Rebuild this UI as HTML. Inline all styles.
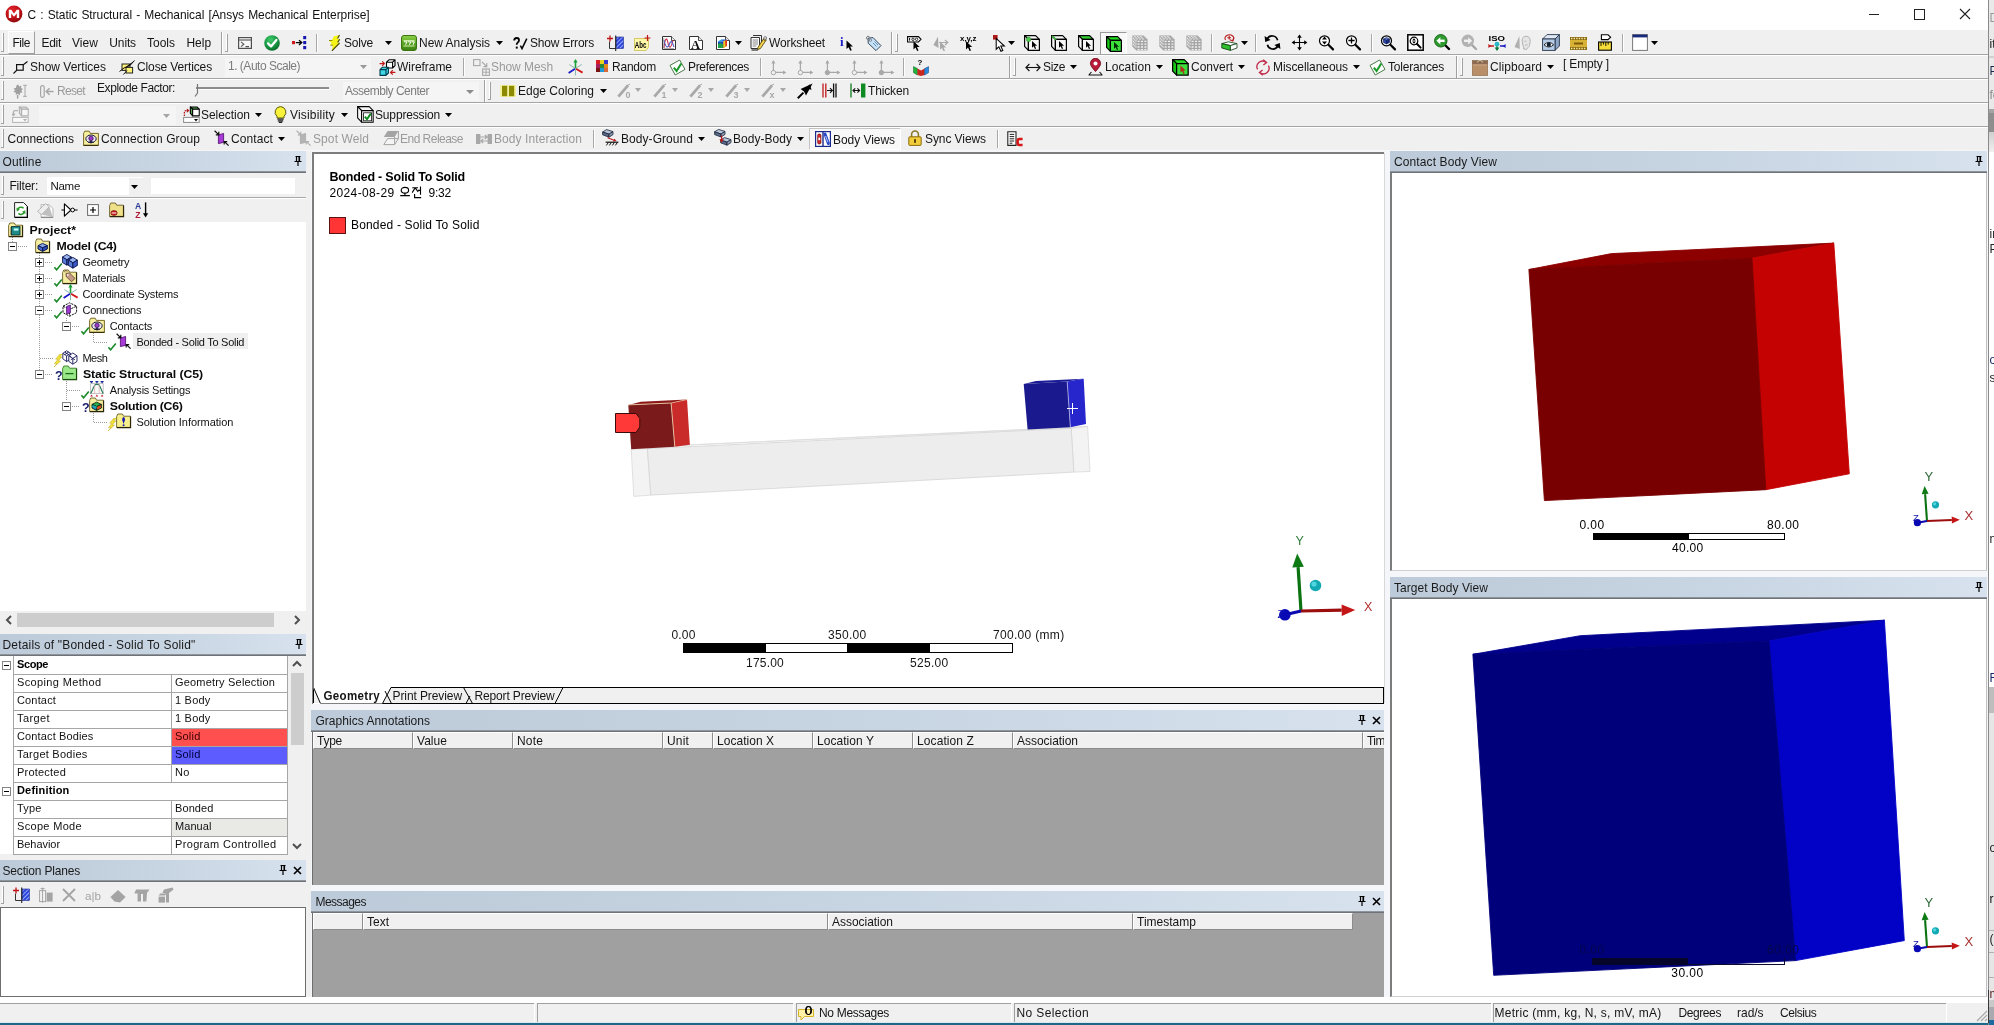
<!DOCTYPE html>
<html><head><meta charset="utf-8"><title>C : Static Structural - Mechanical</title>
<style>
html,body{margin:0;padding:0;}
body{width:1994px;height:1025px;position:relative;overflow:hidden;background:#f0f0f0;font-family:"Liberation Sans",sans-serif;}
#root{position:absolute;left:0;top:0;width:1994px;height:1025px;overflow:hidden;will-change:transform;}
.a{position:absolute;display:block;}
.t{position:absolute;white-space:nowrap;line-height:1;}
</style></head>
<body>
<div id="root">
<div class="a" style="left:0px;top:0px;width:1988px;height:30px;background:#ffffff;"></div>
<svg class="a" style="left:5px;top:5px" width="18" height="18" viewBox="0 0 18 18"><defs><radialGradient id="mlg" cx="0.4" cy="0.3" r="0.8"><stop offset="0" stop-color="#e2262c"/><stop offset="0.6" stop-color="#b90f15"/><stop offset="1" stop-color="#7c060a"/></radialGradient></defs><circle cx="9" cy="9" r="8.4" fill="url(#mlg)"/><path d="M3.8 13V4.8H6.2L9 8.6L11.8 4.8H14.2V13H11.8V8.4L9 11.8L6.2 8.4V13Z" fill="#fff"/></svg>
<div class="t" style="left:27.50px;top:9px;font-size:12.0px;color:#111;letter-spacing:-0.073px;transform:scaleY(1.0833);transform-origin:0 10px;word-spacing:0.9px;">C : Static Structural - Mechanical [Ansys Mechanical Enterprise]</div>
<div class="a" style="left:1869px;top:14px;width:10px;height:1px;background:#222;"></div>
<div class="a" style="left:1914px;top:9px;width:9px;height:9px;border:1px solid #222;"></div>
<svg class="a" style="left:1959px;top:8px" width="12" height="12" viewBox="0 0 12 12"><path d="M1 1L11 11M11 1L1 11" stroke="#222" stroke-width="1.1" fill="none"/></svg>
<div class="a" style="left:0px;top:30px;width:1988px;height:121px;background:#f0f0f0;"></div>
<div class="a" style="left:0px;top:54px;width:1988px;height:1px;background:#a5a5a5;"></div>
<div class="a" style="left:0px;top:55px;width:1988px;height:1px;background:#ffffff;"></div>
<div class="a" style="left:0px;top:78px;width:1988px;height:1px;background:#a5a5a5;"></div>
<div class="a" style="left:0px;top:79px;width:1988px;height:1px;background:#ffffff;"></div>
<div class="a" style="left:0px;top:102px;width:1988px;height:1px;background:#a5a5a5;"></div>
<div class="a" style="left:0px;top:103px;width:1988px;height:1px;background:#ffffff;"></div>
<div class="a" style="left:0px;top:126px;width:1988px;height:1px;background:#a5a5a5;"></div>
<div class="a" style="left:0px;top:127px;width:1988px;height:1px;background:#ffffff;"></div>
<div class="a" style="left:0px;top:150px;width:1988px;height:1px;background:#f6f6f6;"></div>
<div class="a" style="left:1988px;top:0px;width:6px;height:1025px;background:#ffffff;"></div>
<div class="a" style="left:1988px;top:0px;width:1px;height:1025px;background:#8a8a8a;"></div>
<div class="a" style="left:1988px;top:990px;width:1px;height:33px;background:#3a3a3a;"></div>
<div class="a" style="left:1989px;top:0px;width:5px;height:152px;background:#e9e9e9;"></div>
<div class="a" style="left:1989px;top:56px;width:5px;height:2px;background:#d0d0d0;"></div>
<div class="a" style="left:1989px;top:109px;width:5px;height:23px;background:#8e8e8e;"></div>
<div class="a" style="left:1989px;top:109px;width:5px;height:4px;background:#a4a4a4;"></div>
<div class="a" style="left:1989px;top:132px;width:5px;height:20px;background:linear-gradient(180deg,#cfcfcf,#efefef);"></div>
<div class="a" style="left:1989px;top:687px;width:5px;height:26px;background:#bdbdbd;"></div>
<div class="a" style="left:1989px;top:713px;width:5px;height:312px;background:#e6e6e6;"></div>
<div class="a" style="left:1989px;top:1000px;width:5px;height:8px;background:#c9c9c9;"></div>
<div class="a" style="left:1989px;top:1007px;width:5px;height:13px;background:#a9a9b0;"></div>
<div class="a" style="left:1989px;top:1020px;width:5px;height:5px;background:#1a6aa0;"></div>
<div class="a" style="left:1989px;top:930px;width:5px;height:1px;background:#b0b0b0;"></div>
<div class="a" style="left:1989px;top:952px;width:5px;height:1px;background:#b0b0b0;"></div>
<div class="a" style="left:1989px;top:977px;width:5px;height:1px;background:#b0b0b0;"></div>
<div class="a" style="left:1989px;top:10px;width:5px;height:16px;overflow:hidden;"><div class="t" style="left:0.5px;top:2px;font-size:12px;color:#9a9a9a;">D</div></div>
<div class="a" style="left:1989px;top:36px;width:5px;height:16px;overflow:hidden;"><div class="t" style="left:0.5px;top:2px;font-size:12px;color:#111;">it</div></div>
<div class="a" style="left:1989px;top:63px;width:5px;height:16px;overflow:hidden;"><div class="t" style="left:0.5px;top:2px;font-size:12px;color:#1a2a4a;">P</div></div>
<div class="a" style="left:1989px;top:87px;width:5px;height:16px;overflow:hidden;"><div class="t" style="left:0.5px;top:2px;font-size:12px;color:#8a8a8a;">fc</div></div>
<div class="a" style="left:1989px;top:226px;width:5px;height:16px;overflow:hidden;"><div class="t" style="left:0.5px;top:2px;font-size:12px;color:#222;">ir</div></div>
<div class="a" style="left:1989px;top:241px;width:5px;height:16px;overflow:hidden;"><div class="t" style="left:0.5px;top:2px;font-size:12px;color:#222;">Pa</div></div>
<div class="a" style="left:1989px;top:352px;width:5px;height:16px;overflow:hidden;"><div class="t" style="left:0.5px;top:2px;font-size:12px;color:#1a2a6a;">o</div></div>
<div class="a" style="left:1989px;top:370px;width:5px;height:16px;overflow:hidden;"><div class="t" style="left:0.5px;top:2px;font-size:12px;color:#222;">se</div></div>
<div class="a" style="left:1989px;top:531px;width:5px;height:16px;overflow:hidden;"><div class="t" style="left:0.5px;top:2px;font-size:12px;color:#222;">n</div></div>
<div class="a" style="left:1989px;top:670px;width:5px;height:16px;overflow:hidden;"><div class="t" style="left:0.5px;top:2px;font-size:12px;color:#1a2a6a;">Fl</div></div>
<div class="a" style="left:1989px;top:840px;width:5px;height:16px;overflow:hidden;"><div class="t" style="left:0.5px;top:2px;font-size:12px;color:#222;">o</div></div>
<div class="a" style="left:1989px;top:891px;width:5px;height:16px;overflow:hidden;"><div class="t" style="left:0.5px;top:2px;font-size:12px;color:#111;">r</div></div>
<div class="a" style="left:1989px;top:931px;width:5px;height:16px;overflow:hidden;"><div class="t" style="left:0.5px;top:2px;font-size:12px;color:#222;">(</div></div>
<div class="a" style="left:1989px;top:986px;width:5px;height:16px;overflow:hidden;"><div class="t" style="left:0.5px;top:2px;font-size:12px;color:#5a1a1a;">m</div></div>
<div class="a" style="left:0px;top:997px;width:1988px;height:6px;background:#ffffff;"></div>
<div class="a" style="left:0px;top:1003px;width:1988px;height:20px;background:#f0f0f0;"></div>
<div class="a" style="left:0px;top:1022px;width:1988px;height:1px;background:#d9e8ef;"></div>
<div class="a" style="left:0px;top:1023px;width:1988px;height:2px;background:#1b6888;"></div>
<div class="a" style="left:2px;top:33px;width:1px;height:19px;background:#ffffff;"></div>
<div class="a" style="left:3px;top:33px;width:1px;height:19px;background:#a0a0a0;"></div>
<div class="a" style="left:1px;top:51px;width:3px;height:1px;background:#a0a0a0;"></div>
<div class="a" style="left:8px;top:31px;width:27px;height:23px;background:#f4f4f4;border:1px solid #fff;border-right-color:#a0a0a0;border-bottom-color:#a0a0a0;box-sizing:border-box;"></div>
<div class="t" style="left:12.50px;top:37px;font-size:12.0px;color:#151515;letter-spacing:-0.459px;transform:scaleY(1.0833);transform-origin:0 10px;">File</div>
<div class="t" style="left:41.40px;top:37px;font-size:12.0px;color:#151515;letter-spacing:-0.269px;transform:scaleY(1.0833);transform-origin:0 10px;">Edit</div>
<div class="t" style="left:72.00px;top:37px;font-size:12.0px;color:#151515;letter-spacing:0.002px;transform:scaleY(1.0833);transform-origin:0 10px;">View</div>
<div class="t" style="left:109.30px;top:37px;font-size:12.0px;color:#151515;letter-spacing:-0.128px;transform:scaleY(1.0833);transform-origin:0 10px;">Units</div>
<div class="t" style="left:147.00px;top:37px;font-size:12.0px;color:#151515;letter-spacing:-0.003px;transform:scaleY(1.0833);transform-origin:0 10px;">Tools</div>
<div class="t" style="left:186.40px;top:37px;font-size:12.0px;color:#151515;letter-spacing:0.055px;transform:scaleY(1.0833);transform-origin:0 10px;">Help</div>
<div class="a" style="left:221px;top:32px;width:1px;height:22px;background:#a0a0a0;"></div>
<div class="a" style="left:222px;top:32px;width:1px;height:22px;background:#ffffff;"></div>
<div class="a" style="left:226px;top:34px;width:1px;height:18px;background:#ffffff;"></div>
<div class="a" style="left:227px;top:34px;width:1px;height:18px;background:#a0a0a0;"></div>
<div class="a" style="left:225px;top:51px;width:3px;height:1px;background:#a0a0a0;"></div>
<div class="a" style="left:316px;top:34px;width:1px;height:18px;background:#a8a8a8;"></div>
<div class="a" style="left:317px;top:34px;width:1px;height:18px;background:#ffffff;"></div>
<div class="t" style="left:344.00px;top:37px;font-size:12.0px;color:#151515;letter-spacing:-0.204px;transform:scaleY(1.0833);transform-origin:0 10px;">Solve</div>
<svg class="a" style="left:385px;top:41px" width="7" height="4" viewBox="0 0 7 4"><path d="M0 0H7L3.5 4Z" fill="#000"/></svg>
<div class="t" style="left:419.00px;top:37px;font-size:12.0px;color:#151515;letter-spacing:-0.030px;transform:scaleY(1.0833);transform-origin:0 10px;">New Analysis</div>
<svg class="a" style="left:496px;top:41px" width="7" height="4" viewBox="0 0 7 4"><path d="M0 0H7L3.5 4Z" fill="#000"/></svg>
<div class="t" style="left:530.00px;top:37px;font-size:12.0px;color:#151515;letter-spacing:-0.183px;transform:scaleY(1.0833);transform-origin:0 10px;">Show Errors</div>
<svg class="a" style="left:735px;top:41px" width="7" height="4" viewBox="0 0 7 4"><path d="M0 0H7L3.5 4Z" fill="#000"/></svg>
<div class="t" style="left:769.00px;top:37px;font-size:12.0px;color:#151515;letter-spacing:-0.126px;transform:scaleY(1.0833);transform-origin:0 10px;">Worksheet</div>
<div class="a" style="left:891px;top:32px;width:1px;height:22px;background:#a0a0a0;"></div>
<div class="a" style="left:892px;top:32px;width:1px;height:22px;background:#ffffff;"></div>
<div class="a" style="left:896px;top:34px;width:1px;height:18px;background:#ffffff;"></div>
<div class="a" style="left:897px;top:34px;width:1px;height:18px;background:#a0a0a0;"></div>
<div class="a" style="left:895px;top:51px;width:3px;height:1px;background:#a0a0a0;"></div>
<svg class="a" style="left:1008px;top:41px" width="7" height="4" viewBox="0 0 7 4"><path d="M0 0H7L3.5 4Z" fill="#000"/></svg>
<div class="a" style="left:1100px;top:32px;width:27px;height:22px;background:#f8f8f8;border:1px solid #fff;border-left-color:#9a9a9a;border-top-color:#9a9a9a;border-bottom:none;box-sizing:border-box;"></div>
<div class="a" style="left:1211px;top:34px;width:1px;height:18px;background:#a8a8a8;"></div>
<div class="a" style="left:1212px;top:34px;width:1px;height:18px;background:#ffffff;"></div>
<svg class="a" style="left:1241px;top:41px" width="7" height="4" viewBox="0 0 7 4"><path d="M0 0H7L3.5 4Z" fill="#000"/></svg>
<div class="a" style="left:1255px;top:34px;width:1px;height:18px;background:#a8a8a8;"></div>
<div class="a" style="left:1256px;top:34px;width:1px;height:18px;background:#ffffff;"></div>
<div class="a" style="left:1371px;top:34px;width:1px;height:18px;background:#a8a8a8;"></div>
<div class="a" style="left:1372px;top:34px;width:1px;height:18px;background:#ffffff;"></div>
<div class="a" style="left:1622px;top:34px;width:1px;height:18px;background:#a8a8a8;"></div>
<div class="a" style="left:1623px;top:34px;width:1px;height:18px;background:#ffffff;"></div>
<svg class="a" style="left:1651px;top:41px" width="7" height="4" viewBox="0 0 7 4"><path d="M0 0H7L3.5 4Z" fill="#000"/></svg>
<div class="a" style="left:2px;top:57px;width:1px;height:19px;background:#ffffff;"></div>
<div class="a" style="left:3px;top:57px;width:1px;height:19px;background:#a0a0a0;"></div>
<div class="a" style="left:1px;top:75px;width:3px;height:1px;background:#a0a0a0;"></div>
<div class="t" style="left:30.00px;top:61px;font-size:12.0px;color:#151515;letter-spacing:-0.003px;transform:scaleY(1.0833);transform-origin:0 10px;">Show Vertices</div>
<div class="t" style="left:137.00px;top:61px;font-size:12.0px;color:#151515;letter-spacing:-0.121px;transform:scaleY(1.0833);transform-origin:0 10px;">Close Vertices</div>
<div class="a" style="left:225px;top:58px;width:146px;height:19px;background:#f5f5f5;"></div>
<div class="t" style="left:228.00px;top:60px;font-size:12.0px;color:#7c7c7c;letter-spacing:-0.491px;">1. (Auto Scale)</div>
<svg class="a" style="left:360px;top:65px" width="7" height="4" viewBox="0 0 7 4"><path d="M0 0H7L3.5 4Z" fill="#9a9a9a"/></svg>
<div class="t" style="left:397.00px;top:61px;font-size:12.0px;color:#151515;letter-spacing:-0.037px;transform:scaleY(1.0833);transform-origin:0 10px;">Wireframe</div>
<div class="a" style="left:463px;top:58px;width:1px;height:18px;background:#a8a8a8;"></div>
<div class="a" style="left:464px;top:58px;width:1px;height:18px;background:#ffffff;"></div>
<div class="t" style="left:491.00px;top:61px;font-size:12.0px;color:#9a9a9a;letter-spacing:-0.077px;transform:scaleY(1.0833);transform-origin:0 10px;">Show Mesh</div>
<div class="t" style="left:612.00px;top:61px;font-size:12.0px;color:#151515;letter-spacing:-0.226px;transform:scaleY(1.0833);transform-origin:0 10px;">Random</div>
<div class="t" style="left:688.00px;top:61px;font-size:12.0px;color:#151515;letter-spacing:-0.336px;transform:scaleY(1.0833);transform-origin:0 10px;">Preferences</div>
<div class="a" style="left:760px;top:58px;width:1px;height:18px;background:#a8a8a8;"></div>
<div class="a" style="left:761px;top:58px;width:1px;height:18px;background:#ffffff;"></div>
<div class="a" style="left:903px;top:58px;width:1px;height:18px;background:#a8a8a8;"></div>
<div class="a" style="left:904px;top:58px;width:1px;height:18px;background:#ffffff;"></div>
<div class="a" style="left:1009px;top:56px;width:1px;height:22px;background:#a0a0a0;"></div>
<div class="a" style="left:1010px;top:56px;width:1px;height:22px;background:#ffffff;"></div>
<div class="a" style="left:1014px;top:58px;width:1px;height:18px;background:#ffffff;"></div>
<div class="a" style="left:1015px;top:58px;width:1px;height:18px;background:#a0a0a0;"></div>
<div class="a" style="left:1013px;top:75px;width:3px;height:1px;background:#a0a0a0;"></div>
<div class="t" style="left:1043.00px;top:61px;font-size:12.0px;color:#151515;letter-spacing:-0.336px;transform:scaleY(1.0833);transform-origin:0 10px;">Size</div>
<svg class="a" style="left:1070px;top:65px" width="7" height="4" viewBox="0 0 7 4"><path d="M0 0H7L3.5 4Z" fill="#000"/></svg>
<div class="t" style="left:1105.00px;top:61px;font-size:12.0px;color:#151515;letter-spacing:0.079px;transform:scaleY(1.0833);transform-origin:0 10px;">Location</div>
<svg class="a" style="left:1156px;top:65px" width="7" height="4" viewBox="0 0 7 4"><path d="M0 0H7L3.5 4Z" fill="#000"/></svg>
<div class="t" style="left:1191.00px;top:61px;font-size:12.0px;color:#151515;letter-spacing:-0.003px;transform:scaleY(1.0833);transform-origin:0 10px;">Convert</div>
<svg class="a" style="left:1238px;top:65px" width="7" height="4" viewBox="0 0 7 4"><path d="M0 0H7L3.5 4Z" fill="#000"/></svg>
<div class="t" style="left:1273.00px;top:61px;font-size:12.0px;color:#151515;letter-spacing:-0.080px;transform:scaleY(1.0833);transform-origin:0 10px;">Miscellaneous</div>
<svg class="a" style="left:1353px;top:65px" width="7" height="4" viewBox="0 0 7 4"><path d="M0 0H7L3.5 4Z" fill="#000"/></svg>
<div class="t" style="left:1388.00px;top:61px;font-size:12.0px;color:#151515;letter-spacing:-0.203px;transform:scaleY(1.0833);transform-origin:0 10px;">Tolerances</div>
<div class="a" style="left:1456px;top:56px;width:1px;height:22px;background:#a0a0a0;"></div>
<div class="a" style="left:1457px;top:56px;width:1px;height:22px;background:#ffffff;"></div>
<div class="a" style="left:1461px;top:58px;width:1px;height:18px;background:#ffffff;"></div>
<div class="a" style="left:1462px;top:58px;width:1px;height:18px;background:#a0a0a0;"></div>
<div class="a" style="left:1460px;top:75px;width:3px;height:1px;background:#a0a0a0;"></div>
<div class="t" style="left:1490.00px;top:61px;font-size:12.0px;color:#151515;letter-spacing:0.071px;transform:scaleY(1.0833);transform-origin:0 10px;">Clipboard</div>
<svg class="a" style="left:1547px;top:65px" width="7" height="4" viewBox="0 0 7 4"><path d="M0 0H7L3.5 4Z" fill="#000"/></svg>
<div class="t" style="left:1563.00px;top:58px;font-size:12.0px;color:#151515;letter-spacing:-0.149px;">[ Empty ]</div>
<div class="a" style="left:2px;top:81px;width:1px;height:19px;background:#ffffff;"></div>
<div class="a" style="left:3px;top:81px;width:1px;height:19px;background:#a0a0a0;"></div>
<div class="a" style="left:1px;top:99px;width:3px;height:1px;background:#a0a0a0;"></div>
<div class="t" style="left:57.00px;top:85px;font-size:12.0px;color:#9a9a9a;letter-spacing:-0.670px;transform:scaleY(1.0833);transform-origin:0 10px;">Reset</div>
<div class="t" style="left:97.00px;top:82px;font-size:12.0px;color:#151515;letter-spacing:-0.403px;">Explode Factor:</div>
<div class="a" style="left:196px;top:87px;width:133px;height:2px;background:#8c8c8c;"></div>
<div class="a" style="left:196px;top:89px;width:133px;height:1px;background:#fdfdfd;"></div>
<svg class="a" style="left:194px;top:84px" width="6" height="13" viewBox="0 0 6 13"><path d="M3.5 0V9L1 12.5" stroke="#777" stroke-width="1.2" fill="none"/></svg>
<div class="a" style="left:343px;top:82px;width:136px;height:19px;background:#f5f5f5;"></div>
<div class="t" style="left:345.00px;top:85px;font-size:12.0px;color:#7c7c7c;letter-spacing:-0.491px;">Assembly Center</div>
<svg class="a" style="left:466px;top:90px" width="8" height="4" viewBox="0 0 8 4"><path d="M0 0H8L4.0 4Z" fill="#8c8c8c"/></svg>
<div class="a" style="left:484px;top:80px;width:1px;height:22px;background:#a0a0a0;"></div>
<div class="a" style="left:485px;top:80px;width:1px;height:22px;background:#ffffff;"></div>
<div class="a" style="left:489px;top:82px;width:1px;height:18px;background:#ffffff;"></div>
<div class="a" style="left:490px;top:82px;width:1px;height:18px;background:#a0a0a0;"></div>
<div class="a" style="left:488px;top:99px;width:3px;height:1px;background:#a0a0a0;"></div>
<div class="t" style="left:518.00px;top:85px;font-size:12.0px;color:#151515;letter-spacing:-0.004px;transform:scaleY(1.0833);transform-origin:0 10px;">Edge Coloring</div>
<svg class="a" style="left:600px;top:89px" width="7" height="4" viewBox="0 0 7 4"><path d="M0 0H7L3.5 4Z" fill="#000"/></svg>
<svg class="a" style="left:635px;top:88px" width="6" height="4" viewBox="0 0 6 4"><path d="M0 0H6L3.0 4Z" fill="#a8a8a8"/></svg>
<svg class="a" style="left:672px;top:88px" width="6" height="4" viewBox="0 0 6 4"><path d="M0 0H6L3.0 4Z" fill="#a8a8a8"/></svg>
<svg class="a" style="left:708px;top:88px" width="6" height="4" viewBox="0 0 6 4"><path d="M0 0H6L3.0 4Z" fill="#a8a8a8"/></svg>
<svg class="a" style="left:744px;top:88px" width="6" height="4" viewBox="0 0 6 4"><path d="M0 0H6L3.0 4Z" fill="#a8a8a8"/></svg>
<svg class="a" style="left:780px;top:88px" width="6" height="4" viewBox="0 0 6 4"><path d="M0 0H6L3.0 4Z" fill="#a8a8a8"/></svg>
<div class="t" style="left:868.00px;top:85px;font-size:12.0px;color:#151515;letter-spacing:-0.145px;transform:scaleY(1.0833);transform-origin:0 10px;">Thicken</div>
<div class="a" style="left:2px;top:105px;width:1px;height:19px;background:#ffffff;"></div>
<div class="a" style="left:3px;top:105px;width:1px;height:19px;background:#a0a0a0;"></div>
<div class="a" style="left:1px;top:123px;width:3px;height:1px;background:#a0a0a0;"></div>
<div class="a" style="left:39px;top:106px;width:137px;height:19px;background:#f5f5f5;"></div>
<svg class="a" style="left:163px;top:114px" width="7" height="4" viewBox="0 0 7 4"><path d="M0 0H7L3.5 4Z" fill="#a5a5a5"/></svg>
<div class="t" style="left:201.00px;top:109px;font-size:12.0px;color:#151515;letter-spacing:-0.041px;transform:scaleY(1.0833);transform-origin:0 10px;">Selection</div>
<svg class="a" style="left:255px;top:113px" width="7" height="4" viewBox="0 0 7 4"><path d="M0 0H7L3.5 4Z" fill="#000"/></svg>
<div class="t" style="left:290.00px;top:109px;font-size:12.0px;color:#151515;letter-spacing:0.188px;transform:scaleY(1.0833);transform-origin:0 10px;">Visibility</div>
<svg class="a" style="left:341px;top:113px" width="7" height="4" viewBox="0 0 7 4"><path d="M0 0H7L3.5 4Z" fill="#000"/></svg>
<div class="t" style="left:375.00px;top:109px;font-size:12.0px;color:#151515;letter-spacing:-0.155px;transform:scaleY(1.0833);transform-origin:0 10px;">Suppression</div>
<svg class="a" style="left:445px;top:113px" width="7" height="4" viewBox="0 0 7 4"><path d="M0 0H7L3.5 4Z" fill="#000"/></svg>
<div class="a" style="left:2px;top:129px;width:1px;height:19px;background:#ffffff;"></div>
<div class="a" style="left:3px;top:129px;width:1px;height:19px;background:#a0a0a0;"></div>
<div class="a" style="left:1px;top:147px;width:3px;height:1px;background:#a0a0a0;"></div>
<div class="t" style="left:7.50px;top:133px;font-size:12.0px;color:#151515;letter-spacing:-0.019px;transform:scaleY(1.0833);transform-origin:0 10px;">Connections</div>
<div class="t" style="left:101.00px;top:133px;font-size:12.0px;color:#151515;letter-spacing:0.100px;transform:scaleY(1.0833);transform-origin:0 10px;">Connection Group</div>
<div class="t" style="left:231.00px;top:133px;font-size:12.0px;color:#151515;letter-spacing:0.092px;transform:scaleY(1.0833);transform-origin:0 10px;">Contact</div>
<svg class="a" style="left:278px;top:137px" width="7" height="4" viewBox="0 0 7 4"><path d="M0 0H7L3.5 4Z" fill="#000"/></svg>
<div class="t" style="left:313.00px;top:133px;font-size:12.0px;color:#9a9a9a;letter-spacing:0.095px;transform:scaleY(1.0833);transform-origin:0 10px;">Spot Weld</div>
<div class="t" style="left:400.00px;top:133px;font-size:12.0px;color:#9a9a9a;letter-spacing:-0.519px;transform:scaleY(1.0833);transform-origin:0 10px;">End Release</div>
<div class="t" style="left:494.00px;top:133px;font-size:12.0px;color:#9a9a9a;letter-spacing:0.080px;transform:scaleY(1.0833);transform-origin:0 10px;">Body Interaction</div>
<div class="a" style="left:593px;top:130px;width:1px;height:18px;background:#a8a8a8;"></div>
<div class="a" style="left:594px;top:130px;width:1px;height:18px;background:#ffffff;"></div>
<div class="t" style="left:621.00px;top:133px;font-size:12.0px;color:#151515;letter-spacing:0.057px;transform:scaleY(1.0833);transform-origin:0 10px;">Body-Ground</div>
<svg class="a" style="left:698px;top:137px" width="7" height="4" viewBox="0 0 7 4"><path d="M0 0H7L3.5 4Z" fill="#000"/></svg>
<div class="t" style="left:733.00px;top:133px;font-size:12.0px;color:#151515;letter-spacing:0.033px;transform:scaleY(1.0833);transform-origin:0 10px;">Body-Body</div>
<svg class="a" style="left:797px;top:137px" width="7" height="4" viewBox="0 0 7 4"><path d="M0 0H7L3.5 4Z" fill="#000"/></svg>
<div class="a" style="left:809px;top:128px;width:92px;height:22px;background:#f8f8f8;border:1px solid #c4c4c4;border-right-color:#fff;border-bottom-color:#fff;box-sizing:border-box;"></div>
<div class="t" style="left:833.00px;top:134px;font-size:12.0px;color:#151515;letter-spacing:-0.048px;transform:scaleY(1.0833);transform-origin:0 10px;">Body Views</div>
<div class="t" style="left:925.00px;top:133px;font-size:12.0px;color:#151515;letter-spacing:-0.080px;transform:scaleY(1.0833);transform-origin:0 10px;">Sync Views</div>
<div class="a" style="left:997px;top:130px;width:1px;height:18px;background:#a8a8a8;"></div>
<div class="a" style="left:998px;top:130px;width:1px;height:18px;background:#ffffff;"></div>
<svg class="a" style="left:238px;top:37px" width="14" height="12" viewBox="0 0 14 12"><rect x="0.6" y="0.6" width="12.8" height="10.8" fill="#f6f6f6" stroke="#505050" stroke-width="1.2"/><path d="M0.6 3H13.4" stroke="#505050" stroke-width="1.1"/><path d="M3 4.8L5.8 7.2L3 9.6M7.5 9.6H11" stroke="#505050" stroke-width="1.1" fill="none"/></svg>
<svg class="a" style="left:264px;top:35px" width="16" height="16" viewBox="0 0 16 16"><defs><radialGradient id="gck" cx="0.4" cy="0.3" r="0.8"><stop offset="0" stop-color="#3fca6a"/><stop offset="0.6" stop-color="#14923f"/><stop offset="1" stop-color="#075a24"/></radialGradient></defs><circle cx="8" cy="8" r="7.8" fill="url(#gck)"/><path d="M4 8.4L7 11.4L12.4 5" stroke="#fff" stroke-width="2.3" fill="none" stroke-linecap="round" stroke-linejoin="round"/></svg>
<svg class="a" style="left:292px;top:36px" width="16" height="14" viewBox="0 0 16 14"><rect x="0" y="5" width="3" height="3.2" fill="#d01818"/><path d="M3.8 6.6H9.4M7 4.2L9.8 6.6L7 9" stroke="#000" stroke-width="1.3" fill="none"/><rect x="11.2" y="0" width="3" height="3.2" fill="#1818b0"/><rect x="11.2" y="5" width="3" height="3.2" fill="#1818b0"/><rect x="11.2" y="10" width="3" height="3.2" fill="#1818b0"/></svg>
<svg class="a" style="left:328px;top:34px" width="13" height="18" viewBox="0 0 13 18"><polygon points="11.4,1 6,2.2 3.8,6 1.2,6.4 1.8,8 3.8,8.4 2.4,11 4.8,11.8 3.8,16.8 11.6,9 9.6,8.6 11.8,5.2 9.6,4.8" fill="#f6f416"/><path d="M11.5 1L9.6 4.6M11.8 5.2L9.6 8.4M11.6 9L3.9 16.8" stroke="#45450a" stroke-width="1.1" fill="none"/><path d="M1 6.5H4.4M2.4 11.2H4.8" stroke="#8c8a10" stroke-width="1"/></svg>
<svg class="a" style="left:401px;top:35px" width="16" height="16" viewBox="0 0 16 16"><defs><linearGradient id="gna" x1="0" y1="0" x2="0" y2="1"><stop offset="0" stop-color="#8fd04a"/><stop offset="0.5" stop-color="#5aa822"/><stop offset="1" stop-color="#3c7f10"/></linearGradient></defs><rect x="0.5" y="0.5" width="15" height="15" rx="2.5" fill="url(#gna)" stroke="#3a7410" stroke-width="1"/><path d="M2.5 5.6H13.5" stroke="#d6f0b0" stroke-width="1"/><path d="M3 6.8H6L4.6 9.8M6.8 6.8H9.8L8.4 9.8M10.4 6.8H13.4L12 9.8" stroke="#fff" stroke-width="1" fill="none"/><path d="M2.5 11H13.5" stroke="#d6f0b0" stroke-width="1"/></svg>
<svg class="a" style="left:513px;top:37px" width="15" height="14" viewBox="0 0 15 14"><path d="M1.2 3.6Q1.2 1 3.6 1Q6 1 6 3.2Q6 4.6 4.6 5.6Q3.7 6.3 3.7 7.8" stroke="#000" stroke-width="1.8" fill="none"/><rect x="2.8" y="9.6" width="1.9" height="2" fill="#000"/><path d="M7.4 8.6L9 11.6L13.8 1.6" stroke="#000" stroke-width="1.5" fill="none"/></svg>
<svg class="a" style="left:607px;top:35px" width="17" height="16" viewBox="0 0 17 16"><defs><pattern id="hat" width="3" height="3" patternUnits="userSpaceOnUse" patternTransform="rotate(-45)"><rect width="3" height="3" fill="#2c45d8"/><rect width="3" height="1" fill="#93a6ff"/></pattern></defs><rect x="9" y="2" width="7.5" height="11.5" fill="url(#hat)" stroke="#1b2a8c" stroke-width="0.6"/><path d="M2.5 6.5V13.5H8.5" stroke="#333" stroke-width="1" fill="none"/><path d="M8.7 0.5V16" stroke="#222" stroke-width="1.1"/><path d="M0 3.5H6M3 0.5V6.5" stroke="#c01414" stroke-width="1.3"/></svg>
<svg class="a" style="left:634px;top:35px" width="17" height="16" viewBox="0 0 17 16"><path d="M0.5 3.5H14.5V12L12 15.5H0.5Z" fill="#fff8a8" stroke="#cbbf4a" stroke-width="0.8"/><text x="0.8" y="12.6" font-family="Liberation Sans" font-weight="700" font-size="9.2" textLength="11.6" lengthAdjust="spacingAndGlyphs" fill="#000">Abc</text><path d="M10.5 3H16.5M13.5 0V6" stroke="#c01414" stroke-width="1.2"/></svg>
<svg class="a" style="left:661px;top:35px" width="16" height="16" viewBox="0 0 16 16"><path d="M1.5 1.5H10.5L14.5 5.5V14.5H1.5Z" fill="#fff" stroke="#333" stroke-width="1"/><path d="M10.5 1.5V5.5H14.5" fill="#e8e8e8" stroke="#333" stroke-width="0.9"/><path d="M3 13C4 2 6 2 7 8S10 14 12 5" stroke="#c42a4a" stroke-width="1.1" fill="none"/><path d="M3 5C5 14 7 13 8.5 9S11 6 13 12" stroke="#4a5ac4" stroke-width="1.1" fill="none"/><path d="M2.8 3V13.5H13" stroke="#888" stroke-width="0.7" fill="none"/></svg>
<svg class="a" style="left:688px;top:35px" width="16" height="16" viewBox="0 0 16 16"><path d="M1.5 1.5H10.5L14.5 5.5V14.5H1.5Z" fill="#fff" stroke="#333" stroke-width="1"/><path d="M10.5 1.5V5.5H14.5" fill="#e8e8e8" stroke="#333" stroke-width="0.9"/><text x="3" y="13.6" font-family="Liberation Serif" font-weight="700" font-size="12.5" fill="#111">A</text></svg>
<svg class="a" style="left:715px;top:35px" width="16" height="16" viewBox="0 0 16 16"><path d="M1.5 1.5H10.5L14.5 5.5V14.5H1.5Z" fill="#fff" stroke="#333" stroke-width="1"/><path d="M10.5 1.5V5.5H14.5" fill="#e8e8e8" stroke="#333" stroke-width="0.9"/><polygon points="3,6.5 6.5,4.5 12,4.5 8.5,6.5" fill="#2a6ad8"/><polygon points="3,6.5 8.5,6.5 8.5,13 3,13" fill="#1d49c0"/><polygon points="3,9 5.5,8 8.5,9.5 8.5,13 3,13" fill="#21a04a"/><polygon points="8.5,6.5 12,4.5 12,11 8.5,13" fill="#e03a1a"/><polygon points="8.5,6.5 10,5.6 10.5,12 8.5,13" fill="#e8d020"/><polygon points="3,6.5 6.5,4.5 8,5 5,7" fill="#30b0e0"/></svg>
<svg class="a" style="left:750px;top:34px" width="17" height="17" viewBox="0 0 17 17"><path d="M1 3.5H9.5V14.5H1Z" fill="#fff" stroke="#333" stroke-width="1"/><path d="M3 1.5H11.5V12" fill="none" stroke="#333" stroke-width="1"/><path d="M2.6 6H8M2.6 8H8M2.6 10H8M2.6 12H6.4" stroke="#666" stroke-width="0.8"/><path d="M1.5 16H8" stroke="#222" stroke-width="1.1"/><path d="M8 13.2L14 4.2L16.3 5.8L10.4 14.6L7.6 15.6Z" fill="#f2d24a" stroke="#4a3a08" stroke-width="0.8"/><path d="M13.2 5.4L15.5 7" stroke="#4a3a08" stroke-width="0.8"/><circle cx="15.2" cy="4" r="1.5" fill="#d0d0d0" stroke="#555" stroke-width="0.6"/></svg>
<svg class="a" style="left:840px;top:35px" width="15" height="16" viewBox="0 0 15 16"><text x="0" y="10.6" font-family="Liberation Serif" font-weight="700" font-size="13" fill="#1b1bc8">i</text><path transform="translate(6.5 5.5) scale(1.05)" d="M0 0V8.2L2 6.4L3.6 9.8L5 9.2L3.5 5.8H6.2Z" fill="#000"/></svg>
<svg class="a" style="left:865px;top:35px" width="17" height="16" viewBox="0 0 17 16"><path d="M2.2 4.4C0.4 2.6 2.4 0.2 4.6 2" stroke="#555" stroke-width="0.9" fill="none"/><path d="M3 3.2L8 2.6L16 10.6L11 15.6L3.2 8.2Z" fill="#c7e1f6" stroke="#3a4a5a" stroke-width="1"/><circle cx="5.4" cy="5.2" r="1.1" fill="#fff" stroke="#3a4a5a" stroke-width="0.7"/><path d="M8 8L11.5 11.5M9.6 6.6L13 10" stroke="#5a87b0" stroke-width="0.9"/></svg>
<svg class="a" style="left:907px;top:35px" width="15" height="16" viewBox="0 0 15 16"><path d="M0.6 1.6H11.4L14 4.3L11.4 7H0.6Z" fill="#fff" stroke="#000" stroke-width="1.1"/><path d="M2.6 3V5.6" stroke="#000" stroke-width="1"/><circle cx="6" cy="4.3" r="1.2" fill="none" stroke="#000" stroke-width="0.8"/><circle cx="9.6" cy="4.3" r="1.2" fill="none" stroke="#000" stroke-width="0.8"/><path transform="translate(6.5 6.2) scale(1.0)" d="M0 0V8.2L2 6.4L3.6 9.8L5 9.2L3.5 5.8H6.2Z" fill="#000"/></svg>
<svg class="a" style="left:933px;top:35px" width="16" height="16" viewBox="0 0 16 16"><polygon points="0.5,10 5,1.5 5.5,13 " fill="#a9a9a9"/><path d="M6 7.5H14.5M12 5L14.8 7.5L12 10" stroke="#a9a9a9" stroke-width="1.2" fill="none"/><path transform="translate(7 6.6) scale(1.0)" d="M0 0V8.2L2 6.4L3.6 9.8L5 9.2L3.5 5.8H6.2Z" fill="#a9a9a9"/></svg>
<svg class="a" style="left:960px;top:35px" width="17" height="16" viewBox="0 0 17 16"><text x="0" y="5.6" font-family="Liberation Sans" font-weight="700" font-size="6.6" textLength="16.5" lengthAdjust="spacingAndGlyphs" fill="#000">x,y,z</text><path transform="translate(6 6.2) scale(1.0)" d="M0 0V8.2L2 6.4L3.6 9.8L5 9.2L3.5 5.8H6.2Z" fill="#000"/></svg>
<svg class="a" style="left:993px;top:35px" width="13" height="17" viewBox="0 0 13 17"><rect x="0" y="0" width="4.6" height="4.6" fill="#b01a1a"/><path transform="translate(3.2 3.4) scale(1.32)" d="M0 0V8.2L2 6.4L3.6 9.8L5 9.2L3.5 5.8H6.2Z" fill="#fff" stroke="#000" stroke-width="0.8"/></svg>
<svg class="a" style="left:1024px;top:35px" width="16" height="16" viewBox="0 0 16 16"><polygon points="0.6,0.6 11.6,0.6 15.4,4.4 4.4,4.4" fill="#f6f6f6" stroke="#000" stroke-width="1.2" stroke-linejoin="round"/><polygon points="0.6,0.6 4.4,4.4 4.4,15.4 0.6,11.4" fill="#f6f6f6" stroke="#000" stroke-width="1.2" stroke-linejoin="round"/><rect x="4.4" y="4.4" width="11" height="11" fill="#f6f6f6" stroke="#000" stroke-width="1.2" stroke-linejoin="round"/><circle cx="4.6" cy="4.4" r="2.3" fill="#4fc84f" stroke="#2a8a2a" stroke-width="0.5"/><path transform="translate(8 6) scale(0.82)" d="M0 0V8.2L2 6.4L3.6 9.8L5 9.2L3.5 5.8H6.2Z" fill="#000"/></svg>
<svg class="a" style="left:1051px;top:35px" width="16" height="16" viewBox="0 0 16 16"><polygon points="0.6,0.6 11.6,0.6 15.4,4.4 4.4,4.4" fill="#f6f6f6" stroke="#000" stroke-width="1.2" stroke-linejoin="round"/><polygon points="0.6,0.6 4.4,4.4 4.4,15.4 0.6,11.4" fill="#f6f6f6" stroke="#000" stroke-width="1.2" stroke-linejoin="round"/><rect x="4.4" y="4.4" width="11" height="11" fill="#f6f6f6" stroke="#000" stroke-width="1.2" stroke-linejoin="round"/><polygon points="0.8,1.6 1.8,0.6 5.4,4.2 4.4,5.2" fill="#4fc84f" stroke="#2a8a2a" stroke-width="0.5"/><path transform="translate(8 6) scale(0.82)" d="M0 0V8.2L2 6.4L3.6 9.8L5 9.2L3.5 5.8H6.2Z" fill="#000"/></svg>
<svg class="a" style="left:1078px;top:35px" width="16" height="16" viewBox="0 0 16 16"><polygon points="0.6,0.6 11.6,0.6 15.4,4.4 4.4,4.4" fill="#35d035" stroke="#000" stroke-width="1.2" stroke-linejoin="round"/><polygon points="0.6,0.6 4.4,4.4 4.4,15.4 0.6,11.4" fill="#f6f6f6" stroke="#000" stroke-width="1.2" stroke-linejoin="round"/><rect x="4.4" y="4.4" width="11" height="11" fill="#f6f6f6" stroke="#000" stroke-width="1.2" stroke-linejoin="round"/><path transform="translate(8 6) scale(0.82)" d="M0 0V8.2L2 6.4L3.6 9.8L5 9.2L3.5 5.8H6.2Z" fill="#000"/></svg>
<svg class="a" style="left:1106px;top:36px" width="16" height="16" viewBox="0 0 16 16"><polygon points="0.6,0.6 11.6,0.6 15.4,4.4 4.4,4.4" fill="#22dd22" stroke="#000" stroke-width="1.2" stroke-linejoin="round"/><polygon points="0.6,0.6 4.4,4.4 4.4,15.4 0.6,11.4" fill="#16c816" stroke="#000" stroke-width="1.2" stroke-linejoin="round"/><rect x="4.4" y="4.4" width="11" height="11" fill="#3be03b" stroke="#000" stroke-width="1.2" stroke-linejoin="round"/><path transform="translate(8 6) scale(0.82)" d="M0 0V8.2L2 6.4L3.6 9.8L5 9.2L3.5 5.8H6.2Z" fill="#032a03"/></svg>
<svg class="a" style="left:1132px;top:35px" width="16" height="16" viewBox="0 0 16 16"><polygon points="0.4,0.4 11.6,0.4 15.6,4.4 15.6,15.6 4.4,15.6 0.4,11.6" fill="#a6a6a6"/><path d="M1.8 1.6H11M3 2.8H12.2M4.2 4H13.4" stroke="#f0f0f0" stroke-width="0.9" stroke-dasharray="1.8 1.2"/><path d="M5.6 6.4H14.6M5.6 9.2H14.6M5.6 12H14.6M5.6 14.6H14.6" stroke="#f0f0f0" stroke-width="1.3" stroke-dasharray="2 1.4"/><path d="M1.6 2.6V11M2.8 3.8V12.2M4 5V13.4" stroke="#f0f0f0" stroke-width="0.9" stroke-dasharray="1.8 1.2"/></svg>
<svg class="a" style="left:1159px;top:35px" width="16" height="16" viewBox="0 0 16 16"><polygon points="0.4,0.4 11.6,0.4 15.6,4.4 15.6,15.6 4.4,15.6 0.4,11.6" fill="#a6a6a6"/><path d="M1.8 1.6H11M3 2.8H12.2M4.2 4H13.4" stroke="#f0f0f0" stroke-width="0.9" stroke-dasharray="1.8 1.2"/><path d="M5.6 6.4H14.6M5.6 9.2H14.6M5.6 12H14.6M5.6 14.6H14.6" stroke="#f0f0f0" stroke-width="1.3" stroke-dasharray="2 1.4"/><path d="M1.6 2.6V11M2.8 3.8V12.2M4 5V13.4" stroke="#f0f0f0" stroke-width="0.9" stroke-dasharray="1.8 1.2"/></svg>
<svg class="a" style="left:1186px;top:35px" width="16" height="16" viewBox="0 0 16 16"><polygon points="0.4,0.4 11.6,0.4 15.6,4.4 15.6,15.6 4.4,15.6 0.4,11.6" fill="#a6a6a6"/><path d="M1.8 1.6H11M3 2.8H12.2M4.2 4H13.4" stroke="#f0f0f0" stroke-width="0.9" stroke-dasharray="1.8 1.2"/><path d="M5.6 6.4H14.6M5.6 9.2H14.6M5.6 12H14.6M5.6 14.6H14.6" stroke="#f0f0f0" stroke-width="1.3" stroke-dasharray="2 1.4"/><path d="M1.6 2.6V11M2.8 3.8V12.2M4 5V13.4" stroke="#f0f0f0" stroke-width="0.9" stroke-dasharray="1.8 1.2"/></svg>
<svg class="a" style="left:1221px;top:34px" width="17" height="17" viewBox="0 0 17 17"><path d="M4.6 6A4.4 3.4 0 1 1 11.6 6.6" stroke="#b81a1a" stroke-width="1.1" fill="none"/><path d="M12.8 3.4L11.8 7L8.8 5.8" stroke="#b81a1a" stroke-width="1.1" fill="none"/><path d="M8.2 1.8V5.6M6.3 3.7H10.1" stroke="#b81a1a" stroke-width="1.1"/><polygon points="0.8,9.6 7.4,7.8 16,9.6 9.4,11.6" fill="#fff" stroke="#0a3a0a" stroke-width="0.8"/><polygon points="0.8,9.6 9.4,11.6 9.4,16.4 0.8,14" fill="#2fc02f" stroke="#0a3a0a" stroke-width="0.8"/><polygon points="9.4,11.6 16,9.6 16,14 9.4,16.4" fill="#fff" stroke="#0a3a0a" stroke-width="0.8"/></svg>
<svg class="a" style="left:1264px;top:34px" width="17" height="17" viewBox="0 0 17 17"><path d="M13.6 6.2A5.6 5.6 0 0 0 3.2 5" stroke="#000" stroke-width="1.7" fill="none"/><polygon points="0.6,2 1.2,8 6.6,6" fill="#000"/><path d="M3.4 10.8A5.6 5.6 0 0 0 13.8 12" stroke="#000" stroke-width="1.7" fill="none"/><polygon points="16.4,15 15.8,9 10.4,11" fill="#000"/></svg>
<svg class="a" style="left:1291px;top:34px" width="17" height="17" viewBox="0 0 17 17"><path d="M8.5 2.5V14.5M2.5 8.5H14.5" stroke="#000" stroke-width="1.1"/><polygon points="8.5,0.6 6.2,3.8 10.8,3.8" fill="#000"/><polygon points="8.5,16.4 6.2,13.2 10.8,13.2" fill="#000"/><polygon points="0.6,8.5 3.8,6.2 3.8,10.8" fill="#000"/><polygon points="16.4,8.5 13.2,6.2 13.2,10.8" fill="#000"/></svg>
<svg class="a" style="left:1318px;top:34px" width="17" height="17" viewBox="0 0 17 17"><circle cx="6.5" cy="6.8" r="5" fill="#fff" stroke="#000" stroke-width="1.2"/><path d="M10.4 10.8L15 15.4" stroke="#000" stroke-width="2.2" stroke-linecap="round"/><polygon points="6.5,2.6 4,5.6 9,5.6" fill="#000"/><polygon points="6.5,10.4 4,7.4 9,7.4" fill="#000"/></svg>
<svg class="a" style="left:1345px;top:34px" width="17" height="17" viewBox="0 0 17 17"><circle cx="6.5" cy="6.8" r="5" fill="#fff" stroke="#000" stroke-width="1.2"/><path d="M10.4 10.8L15 15.4" stroke="#000" stroke-width="2.2" stroke-linecap="round"/><path d="M3.4 6.5H9.6M6.5 3.4V9.6" stroke="#000" stroke-width="1.3"/></svg>
<svg class="a" style="left:1380px;top:34px" width="17" height="17" viewBox="0 0 17 17"><circle cx="6.5" cy="6.8" r="5" fill="#fff" stroke="#000" stroke-width="1.2"/><path d="M10.4 10.8L15 15.4" stroke="#000" stroke-width="2.2" stroke-linecap="round"/><polygon points="3.4,5 6.5,3.4 9.6,5 6.5,6.4" fill="#5a78c8" stroke="#0a1a5a" stroke-width="0.6"/><polygon points="3.4,5 6.5,6.4 6.5,10 3.4,8.4" fill="#2a48a8" stroke="#0a1a5a" stroke-width="0.6"/><polygon points="6.5,6.4 9.6,5 9.6,8.4 6.5,10" fill="#1a2a7a" stroke="#0a1a5a" stroke-width="0.6"/></svg>
<svg class="a" style="left:1407px;top:34px" width="17" height="17" viewBox="0 0 17 17"><rect x="0.8" y="0.8" width="15.4" height="15.4" fill="#fff" stroke="#000" stroke-width="1.5"/><circle cx="7" cy="7" r="3.8" fill="#fff" stroke="#000" stroke-width="1.2"/><path d="M9.8 9.8L13.6 13.6" stroke="#000" stroke-width="2" stroke-linecap="round"/><polygon points="7,4.2 5.2,6.4 8.8,6.4" fill="#000"/><polygon points="7,9.8 5.2,7.6 8.8,7.6" fill="#000"/></svg>
<svg class="a" style="left:1434px;top:34px" width="17" height="17" viewBox="0 0 17 17"><path d="M10.5 10.5L15 15" stroke="#000" stroke-width="2.4" stroke-linecap="round"/><circle cx="6.8" cy="6.8" r="6.2" fill="#2f9a2f" stroke="#156a15" stroke-width="1"/><path d="M10.6 6.8H5" stroke="#fff" stroke-width="2.4"/><polygon points="2.4,6.8 6.4,3.2 6.4,10.4" fill="#fff"/></svg>
<svg class="a" style="left:1461px;top:34px" width="17" height="17" viewBox="0 0 17 17"><path d="M10.5 10.5L15 15" stroke="#a6a6a6" stroke-width="2.4" stroke-linecap="round"/><circle cx="6.8" cy="6.8" r="6.2" fill="#b2b2b2"/><path d="M3 6.8H8.6" stroke="#f0f0f0" stroke-width="2.4"/><polygon points="11.2,6.8 7.2,3.2 7.2,10.4" fill="#f0f0f0"/></svg>
<svg class="a" style="left:1488px;top:34px" width="18" height="17" viewBox="0 0 18 17"><text x="0.5" y="6.6" font-family="Liberation Sans" font-weight="700" font-size="7.6" textLength="16.5" lengthAdjust="spacingAndGlyphs" fill="#000">ISO</text><path d="M9 9V16" stroke="#0a7a3a" stroke-width="1.4"/><polygon points="9,17 6.6,13.6 11.4,13.6" fill="#0a7a3a"/><path d="M1 12H6" stroke="#c01818" stroke-width="1.5"/><polygon points="0.4,10 3.2,12 0.4,14" fill="#c01818" transform="translate(0,0)"/><path d="M12 12H17" stroke="#1a1ac0" stroke-width="1.5"/><polygon points="17.6,10 14.8,12 17.6,14" fill="#1a1ac0"/><circle cx="9" cy="10.2" r="2.4" fill="#2ab8c8"/></svg>
<svg class="a" style="left:1514px;top:34px" width="18" height="17" viewBox="0 0 18 17"><polygon points="0.5,13 5.4,2 5.8,15" fill="#b0b0b0"/><path d="M9 3.6C11 1.4 15.4 2 16 5.4C16.6 8.4 15.4 9.6 15.6 11.4C15 13 13.6 13.4 12.6 15.4L9.6 15C10.2 12.6 8.4 11 8.4 8.2C8 6.6 8 5 9 3.6Z" fill="#e6e6e6" stroke="#b0b0b0" stroke-width="1"/><path d="M10.4 7.2H12.4M11 10.8Q12.4 11.6 13.6 10.8" stroke="#b0b0b0" stroke-width="0.9" fill="none"/></svg>
<svg class="a" style="left:1542px;top:34px" width="18" height="17" viewBox="0 0 18 17"><polygon points="0.6,5 5,0.6 17.4,0.6 13,5" fill="#dfe9f6" stroke="#26344a" stroke-width="0.9"/><polygon points="13,5 17.4,0.6 17.4,12 13,16.4" fill="#8fa6c6" stroke="#26344a" stroke-width="0.9"/><rect x="0.6" y="5" width="12.4" height="11.4" fill="#b6cbe6" stroke="#26344a" stroke-width="0.9"/><path d="M2 10.8Q6.8 6 11.6 10.8Q6.8 15.2 2 10.8Z" fill="#fff" stroke="#111" stroke-width="0.9"/><circle cx="6.8" cy="10.7" r="2.1" fill="#123"/></svg>
<svg class="a" style="left:1570px;top:37px" width="17" height="13" viewBox="0 0 17 13"><rect x="0" y="0" width="17" height="13" fill="#8a6a10"/><rect x="0" y="3" width="17" height="7" fill="#d8b234"/><path d="M1 1.5H16M1 11.5H16" stroke="#f6e9a8" stroke-width="1.4" stroke-dasharray="1.4 1.2"/><path d="M4 6.5H13" stroke="#7a5a0a" stroke-width="2"/></svg>
<svg class="a" style="left:1598px;top:34px" width="14" height="17" viewBox="0 0 14 17"><path d="M3.4 0.8H10L12.6 3.2L10 5.6H3.4Z" fill="#fff" stroke="#000" stroke-width="1.1"/><rect x="0.6" y="8" width="12.8" height="8.2" fill="#f4dc3a" stroke="#000" stroke-width="1.1"/><path d="M3 8V12M5.4 8V10.6M7.8 8V12M10.2 8V10.6" stroke="#000" stroke-width="0.9"/></svg>
<svg class="a" style="left:1632px;top:34px" width="16" height="17" viewBox="0 0 16 17"><rect x="0.6" y="0.6" width="14.8" height="15.8" fill="#fff" stroke="#777" stroke-width="1"/><rect x="0.6" y="0.6" width="14.8" height="2.8" fill="#1a2a7a"/></svg>
<svg class="a" style="left:13px;top:61px" width="15" height="13" viewBox="0 0 15 13"><path d="M0.5 12.5L4 9M10 4L14.5 0.5" stroke="#111" stroke-width="1.1"/><rect x="3.6" y="3.6" width="6.6" height="5.6" fill="#f0f0f0" stroke="#111" stroke-width="1.2"/></svg>
<svg class="a" style="left:119px;top:60px" width="16" height="15" viewBox="0 0 16 15"><rect x="3" y="4" width="8" height="6.4" fill="#fff27a" stroke="#222" stroke-width="1"/><rect x="7" y="7.4" width="6.6" height="5.6" fill="#fff27a" stroke="#222" stroke-width="1"/><path d="M0.5 11.5L5 8L11 5.5L15.5 0.5M4.4 14.5L8 10.6" stroke="#111" stroke-width="1"/></svg>
<svg class="a" style="left:379px;top:59px" width="17" height="17" viewBox="0 0 17 17"><path d="M0.6 4.6H5M3.2 2.4L5.4 4.6L3.2 6.8" stroke="#c01818" stroke-width="1.2" fill="none"/><path d="M16.4 13.4H12M13.8 11.2L11.6 13.4L13.8 15.6" stroke="#c01818" stroke-width="1.2" fill="none"/><path d="M7.5 3.2L10 0.8H16V6.6L13.6 9H7.5ZM7.5 3.2H13.6V9M13.6 3.2L16 0.8" fill="#fff" stroke="#000" stroke-width="1.1" stroke-linejoin="round"/><path d="M1 10.6L3.4 8.2H9.4V14L7 16.4H1ZM1 10.6H7V16.4M7 10.6L9.4 8.2" fill="#3fd6e6" stroke="#003a4a" stroke-width="1.1" stroke-linejoin="round"/></svg>
<svg class="a" style="left:473px;top:59px" width="17" height="17" viewBox="0 0 17 17"><rect x="0.6" y="0.6" width="6.4" height="6" fill="none" stroke="#a8a8a8" stroke-width="1.1"/><path d="M9 3L13.6 7.4M13.8 4V7.6H10.4" stroke="#a8a8a8" stroke-width="1.1" fill="none"/><rect x="9.6" y="10" width="6.8" height="6.4" fill="none" stroke="#a8a8a8" stroke-width="1.1"/><path d="M13 10V16.4M9.6 13.2H16.4" stroke="#a8a8a8" stroke-width="1"/></svg>
<svg class="a" style="left:567px;top:59px" width="17" height="17" viewBox="0 0 17 17"><path d="M8.5 9.5V1.4" stroke="#1aa03a" stroke-width="1.6"/><polygon points="8.5,0 6.4,3.6 10.6,3.6" fill="#1aa03a"/><path d="M8.5 9.5L1.6 14" stroke="#1a1ac8" stroke-width="1.8"/><path d="M8.5 9.5L15.6 13.6" stroke="#d01818" stroke-width="1.8"/><path d="M8.5 9.5L2.4 5.6M8.5 9.5L14.8 5.4M8.5 9.5V16.4" stroke="#8ab8b0" stroke-width="1"/></svg>
<svg class="a" style="left:596px;top:60px" width="12" height="12" viewBox="0 0 12 12"><rect x="0" y="0" width="4.05" height="4.05" fill="#d81e1e"/><rect x="4" y="0" width="4.05" height="4.05" fill="#e8d21e"/><rect x="8" y="0" width="4.05" height="4.05" fill="#3a3ac8"/><rect x="0" y="4" width="4.05" height="4.05" fill="#a81e5a"/><rect x="4" y="4" width="4.05" height="4.05" fill="#2a8a3a"/><rect x="8" y="4" width="4.05" height="4.05" fill="#e8861e"/><rect x="0" y="8" width="4.05" height="4.05" fill="#7a1414"/><rect x="4" y="8" width="4.05" height="4.05" fill="#1e9ad8"/><rect x="8" y="8" width="4.05" height="4.05" fill="#d86a3a"/></svg>
<svg class="a" style="left:669px;top:59px" width="17" height="17" viewBox="0 0 17 17"><path d="M1 6.4L10.6 1L16 10.4L6.2 16Z" fill="#fff" stroke="#4a7a4a" stroke-width="1" stroke-linejoin="round"/><path d="M4.8 8.6L7.6 12L12.2 4.6" stroke="#1a9a2a" stroke-width="2" fill="none"/></svg>
<svg class="a" style="left:770px;top:60px" width="17" height="16" viewBox="0 0 17 16"><path d="M3.4 12.4V1.6M3.4 12.4H15" stroke="#a8a8a8" stroke-width="1.2" fill="none"/><polygon points="3.4,0 1.4,3.4 5.4,3.4" fill="#a8a8a8"/><polygon points="16.4,12.4 13,10.4 13,14.4" fill="#a8a8a8"/><circle cx="3.4" cy="12.6" r="2.2" fill="#f0f0f0" stroke="#a8a8a8" stroke-width="1"/></svg>
<svg class="a" style="left:797px;top:60px" width="17" height="16" viewBox="0 0 17 16"><path d="M3.4 12.4V1.6M3.4 12.4H15" stroke="#a8a8a8" stroke-width="1.2" fill="none"/><polygon points="3.4,0 1.4,3.4 5.4,3.4" fill="#a8a8a8"/><polygon points="16.4,12.4 13,10.4 13,14.4" fill="#a8a8a8"/><circle cx="3.4" cy="12.6" r="2.2" fill="#f0f0f0" stroke="#a8a8a8" stroke-width="1"/></svg>
<svg class="a" style="left:824px;top:60px" width="17" height="16" viewBox="0 0 17 16"><path d="M3.4 12.4V1.6M3.4 12.4H15" stroke="#a8a8a8" stroke-width="1.2" fill="none"/><polygon points="3.4,0 1.4,3.4 5.4,3.4" fill="#a8a8a8"/><polygon points="16.4,12.4 13,10.4 13,14.4" fill="#a8a8a8"/><circle cx="3.4" cy="12.6" r="2.2" fill="#a8a8a8" stroke="#a8a8a8" stroke-width="1"/></svg>
<svg class="a" style="left:851px;top:60px" width="17" height="16" viewBox="0 0 17 16"><path d="M3.4 12.4V1.6M3.4 12.4H15" stroke="#a8a8a8" stroke-width="1.2" fill="none"/><polygon points="3.4,0 1.4,3.4 5.4,3.4" fill="#a8a8a8"/><polygon points="16.4,12.4 13,10.4 13,14.4" fill="#a8a8a8"/><circle cx="3.4" cy="12.6" r="2.2" fill="#f0f0f0" stroke="#a8a8a8" stroke-width="1"/></svg>
<svg class="a" style="left:878px;top:60px" width="17" height="16" viewBox="0 0 17 16"><path d="M3.4 12.4V1.6M3.4 12.4H15" stroke="#a8a8a8" stroke-width="1.2" fill="none"/><polygon points="3.4,0 1.4,3.4 5.4,3.4" fill="#a8a8a8"/><polygon points="16.4,12.4 13,10.4 13,14.4" fill="#a8a8a8"/><circle cx="3.4" cy="12.6" r="2.2" fill="#a8a8a8" stroke="#a8a8a8" stroke-width="1"/></svg>
<svg class="a" style="left:913px;top:59px" width="16" height="17" viewBox="0 0 16 17"><text x="4.6" y="6.4" font-family="Liberation Sans" font-weight="700" font-size="8" fill="#000">?</text><polygon points="0.4,7.6 4.4,9.6 4.4,16 0.4,13.6" fill="#1fb43a" stroke="#0a5a1a" stroke-width="0.5"/><polygon points="4.4,9.6 8,11.4 8,17 4.4,16" fill="#c8281e"/><polygon points="8,11.4 11.6,9.6 11.6,16 8,17" fill="#c8281e"/><polygon points="11.6,9.6 15.6,7.6 15.6,13.6 11.6,16" fill="#2a8ae0" stroke="#0a3a7a" stroke-width="0.5"/></svg>
<svg class="a" style="left:1025px;top:63px" width="16" height="9" viewBox="0 0 16 9"><path d="M1.4 4.5H14.6" stroke="#111" stroke-width="1.1"/><path d="M4.4 1L0.9 4.5L4.4 8M11.6 1L15.1 4.5L11.6 8" stroke="#111" stroke-width="1.1" fill="none"/></svg>
<svg class="a" style="left:1088px;top:58px" width="15" height="18" viewBox="0 0 15 18"><path d="M7.5 13.6C3.6 9 2.4 7.4 2.4 5.4A5.1 5.1 0 0 1 12.6 5.4C12.6 7.4 11.4 9 7.5 13.6Z" fill="#b81a3a" stroke="#6a0a1a" stroke-width="0.8"/><circle cx="7.5" cy="5.4" r="2" fill="#fff"/><path d="M0.5 17H14.5M3.4 14L0.8 17M11.6 14L14.2 17" stroke="#111" stroke-width="1.1" fill="none"/></svg>
<svg class="a" style="left:1172px;top:59px" width="17" height="17" viewBox="0 0 17 17"><g transform="scale(1.05)"><polygon points="0.6,0.6 11.6,0.6 15.4,4.4 4.4,4.4" fill="#22dd22" stroke="#000" stroke-width="1.2" stroke-linejoin="round"/><polygon points="0.6,0.6 4.4,4.4 4.4,15.4 0.6,11.4" fill="#16c816" stroke="#000" stroke-width="1.2" stroke-linejoin="round"/><rect x="4.4" y="4.4" width="11" height="11" fill="#3be03b" stroke="#000" stroke-width="1.2" stroke-linejoin="round"/></g><path transform="translate(8.4 6.6) scale(0.85)" d="M0 0V8.2L2 6.4L3.6 9.8L5 9.2L3.5 5.8H6.2Z" fill="#b02a1a"/></svg>
<svg class="a" style="left:1255px;top:59px" width="16" height="17" viewBox="0 0 16 17"><path d="M2.6 10.4A5.6 5.6 0 0 1 10.8 3.2" stroke="#c02a4a" stroke-width="1.3" fill="none"/><path d="M8.2 0.8L11.6 3.4L8.4 6" stroke="#c02a4a" stroke-width="1.3" fill="none"/><path d="M13.4 6.6A5.6 5.6 0 0 1 5.2 13.8" stroke="#c02a4a" stroke-width="1.3" fill="none"/><path d="M7.8 16.2L4.4 13.6L7.6 11" stroke="#c02a4a" stroke-width="1.3" fill="none"/></svg>
<svg class="a" style="left:1369px;top:59px" width="17" height="17" viewBox="0 0 17 17"><path d="M1 6.4L10.6 1L16 10.4L6.2 16Z" fill="#fff" stroke="#4a7a4a" stroke-width="1" stroke-linejoin="round"/><path d="M4.8 8.6L7.6 12L12.2 4.6" stroke="#1a9a2a" stroke-width="2" fill="none"/></svg>
<svg class="a" style="left:1472px;top:59px" width="16" height="17" viewBox="0 0 16 17"><rect x="0.3" y="1.6" width="15.4" height="15" fill="#b98f6a" stroke="#8a6a4a" stroke-width="0.6"/><rect x="0.3" y="1.6" width="15.4" height="3.6" fill="#8a6a50"/><path d="M5 3.4L8 1L11 3.4" stroke="#d8c8b0" stroke-width="1" fill="none"/><path d="M1 6H15" stroke="#d0b090" stroke-width="0.8"/></svg>
<svg class="a" style="left:12px;top:83px" width="15" height="16" viewBox="0 0 15 16"><path d="M6 1.6L7.4 3.4L9.4 2.6L9 5L11 6L9.4 7.6L10.4 9.6L8.2 9.8L7.6 12.4L5.8 10.8L3.8 12L3.8 9.6L1.4 9L3 7.2L1.6 5.2L4 5L4.4 2.6Z" fill="#a0a0a0"/><path d="M5.6 12V15.6" stroke="#a0a0a0" stroke-width="1.4"/><path d="M13 2.6V13M11.2 2.4H14.8M11.2 13.4H14.8" stroke="#b0b0b0" stroke-width="1.1"/></svg>
<svg class="a" style="left:40px;top:85px" width="14" height="13" viewBox="0 0 14 13"><rect x="0.6" y="0.6" width="3.6" height="11.8" rx="1.8" fill="none" stroke="#a6a6a6" stroke-width="1.2"/><path d="M6.4 6.5H13.6M9.6 3.2L6.2 6.5L9.6 9.8" stroke="#a6a6a6" stroke-width="1.5" fill="none"/></svg>
<svg class="a" style="left:500px;top:85px" width="16" height="12" viewBox="0 0 16 12"><rect x="0" y="0" width="16" height="12" fill="#f6f36a" opacity="0.6"/><rect x="2" y="0.8" width="5.2" height="10.4" fill="#8c8a00"/><rect x="9" y="0.8" width="5.2" height="10.4" fill="#8c8a00"/></svg>
<svg class="a" style="left:617px;top:83px" width="16" height="16" viewBox="0 0 16 16"><path d="M1.4 13.6L11 2.4" stroke="#a8a8a8" stroke-width="2.8" stroke-linecap="butt"/><path d="M8 6Q9.6 1.6 13 1.2" stroke="#a8a8a8" stroke-width="1" fill="none"/><text x="8.6" y="14.6" font-family="Liberation Sans" font-weight="700" font-size="9" fill="#a8a8a8">0</text></svg>
<svg class="a" style="left:653px;top:83px" width="16" height="16" viewBox="0 0 16 16"><path d="M1.4 13.6L11 2.4" stroke="#a8a8a8" stroke-width="2.8" stroke-linecap="butt"/><path d="M8 6Q9.6 1.6 13 1.2" stroke="#a8a8a8" stroke-width="1" fill="none"/><text x="8.6" y="14.6" font-family="Liberation Sans" font-weight="700" font-size="9" fill="#a8a8a8">1</text></svg>
<svg class="a" style="left:689px;top:83px" width="16" height="16" viewBox="0 0 16 16"><path d="M1.4 13.6L11 2.4" stroke="#a8a8a8" stroke-width="2.8" stroke-linecap="butt"/><path d="M8 6Q9.6 1.6 13 1.2" stroke="#a8a8a8" stroke-width="1" fill="none"/><text x="8.6" y="14.6" font-family="Liberation Sans" font-weight="700" font-size="9" fill="#a8a8a8">2</text></svg>
<svg class="a" style="left:725px;top:83px" width="16" height="16" viewBox="0 0 16 16"><path d="M1.4 13.6L11 2.4" stroke="#a8a8a8" stroke-width="2.8" stroke-linecap="butt"/><path d="M8 6Q9.6 1.6 13 1.2" stroke="#a8a8a8" stroke-width="1" fill="none"/><text x="8.6" y="14.6" font-family="Liberation Sans" font-weight="700" font-size="9" fill="#a8a8a8">3</text></svg>
<svg class="a" style="left:761px;top:83px" width="16" height="16" viewBox="0 0 16 16"><path d="M1.4 13.6L11 2.4" stroke="#a8a8a8" stroke-width="2.8" stroke-linecap="butt"/><path d="M8 6Q9.6 1.6 13 1.2" stroke="#a8a8a8" stroke-width="1" fill="none"/><text x="8.6" y="14.6" font-family="Liberation Sans" font-weight="700" font-size="9" fill="#a8a8a8">x</text></svg>
<svg class="a" style="left:797px;top:83px" width="16" height="16" viewBox="0 0 16 16"><path d="M0.8 15.2L6.4 9.6" stroke="#000" stroke-width="2"/><polygon points="15.6,0.4 3.6,6 7,8.4 9,12.4" fill="#000"/><polygon points="9.2,5.4 12.6,1.2 14.6,6.8" fill="#000"/></svg>
<svg class="a" style="left:822px;top:83px" width="15" height="15" viewBox="0 0 15 15"><path d="M1 0.5V14.5" stroke="#c01818" stroke-width="1.3"/><path d="M3.8 0.5V14.5" stroke="#c01818" stroke-width="1.3"/><path d="M5 7.5H10M8 5.2L10.4 7.5L8 9.8" stroke="#111" stroke-width="1.1" fill="none"/><path d="M11.6 0.5V14.5M14 0.5V14.5" stroke="#111" stroke-width="1.3"/></svg>
<svg class="a" style="left:850px;top:83px" width="16" height="15" viewBox="0 0 16 15"><path d="M1 0.5V14.5" stroke="#0a7a1a" stroke-width="1.3"/><path d="M3 7.5H9.6M5.2 5.4L3 7.5L5.2 9.6M7.4 5.4L9.6 7.5L7.4 9.6" stroke="#111" stroke-width="1.1" fill="none"/><rect x="11" y="0.5" width="4.4" height="14" fill="#0f8a22"/></svg>
<svg class="a" style="left:12px;top:106px" width="17" height="17" viewBox="0 0 17 17"><g transform="translate(7 0.6) scale(0.6)"><polygon points="0.6,0.6 11.6,0.6 15.4,4.4 4.4,4.4" fill="#dcdcdc" stroke="#b0b0b0" stroke-width="1.8" stroke-linejoin="round"/><polygon points="0.6,0.6 4.4,4.4 4.4,15.4 0.6,11.4" fill="#dcdcdc" stroke="#b0b0b0" stroke-width="1.8" stroke-linejoin="round"/><rect x="4.4" y="4.4" width="11" height="11" fill="#f6f6f6" stroke="#b0b0b0" stroke-width="1.8" stroke-linejoin="round"/></g><path d="M6 4.6H3.2Q1.4 4.6 1.4 6.4V8.6" stroke="#b0b0b0" stroke-width="1.3" fill="none"/><polygon points="1.4,10.6 -0.8,7.8 3.6,7.8" fill="#b0b0b0"/><rect x="0.6" y="11.4" width="15.6" height="5" fill="#f8f8f8" stroke="#b4b4b4" stroke-width="1"/><polygon points="11,13 15,13 13,15.4" fill="#b0b0b0"/></svg>
<svg class="a" style="left:183px;top:106px" width="17" height="17" viewBox="0 0 17 17"><g transform="translate(7 0.6) scale(0.6)"><polygon points="0.6,0.6 11.6,0.6 15.4,4.4 4.4,4.4" fill="#5aa85a" stroke="#000" stroke-width="1.8" stroke-linejoin="round"/><polygon points="0.6,0.6 4.4,4.4 4.4,15.4 0.6,11.4" fill="#5aa85a" stroke="#000" stroke-width="1.8" stroke-linejoin="round"/><rect x="4.4" y="4.4" width="11" height="11" fill="#fff" stroke="#000" stroke-width="1.8" stroke-linejoin="round"/></g><path d="M1.4 10V6.4Q1.4 4.6 3.2 4.6H5" stroke="#b01a1a" stroke-width="1.3" fill="none" stroke-dasharray="1.6 0.8"/><polygon points="6.6,4.6 3.8,2.4 3.8,6.8" fill="#b01a1a"/><rect x="0.6" y="11.4" width="15.6" height="5" fill="#fff" stroke="#8a8a8a" stroke-width="1"/><polygon points="11,13 15,13 13,15.4" fill="#000"/></svg>
<svg class="a" style="left:274px;top:106px" width="13" height="17" viewBox="0 0 13 17"><path d="M6.5 0.6A5.6 5.6 0 0 0 3 10.4V12H10V10.4A5.6 5.6 0 0 0 6.5 0.6Z" fill="#f8f23a" stroke="#5a5a0a" stroke-width="1"/><path d="M3.4 13.2H9.6M3.8 14.8H9.2M4.8 16.4H8.2" stroke="#222" stroke-width="1.2"/></svg>
<svg class="a" style="left:357px;top:106px" width="17" height="17" viewBox="0 0 17 17"><g transform="scale(1.05)"><polygon points="0.6,0.6 11.6,0.6 15.4,4.4 4.4,4.4" fill="#f6f6f6" stroke="#000" stroke-width="1.0" stroke-linejoin="round"/><polygon points="0.6,0.6 4.4,4.4 4.4,15.4 0.6,11.4" fill="#f6f6f6" stroke="#000" stroke-width="1.0" stroke-linejoin="round"/><rect x="4.4" y="4.4" width="11" height="11" fill="#f6f6f6" stroke="#000" stroke-width="1.0" stroke-linejoin="round"/></g><rect x="6.6" y="6.8" width="8" height="8" fill="#fff" stroke="#111" stroke-width="0.8"/><path d="M7.8 10.6L10 13.2L13.8 7.6" stroke="#0a8a1a" stroke-width="1.9" fill="none"/></svg>
<svg class="a" style="left:83px;top:130px" width="16" height="16" viewBox="0 0 16 16"><path d="M0.6 3.4L1.8 1.2H6.2L7.4 3.4H15.4V15.4H0.6Z" fill="#f7efa0" stroke="#6a5a10" stroke-width="0.9"/><path d="M0.6 15.4H15.4" stroke="#3a3008" stroke-width="1.2"/><ellipse cx="8" cy="8.8" rx="5.2" ry="3.8" fill="#e8e0f0" stroke="#1a1a3a" stroke-width="1"/><circle cx="8" cy="8.4" r="2.2" fill="#9a3ac8" stroke="#2a0a4a" stroke-width="0.7"/><path d="M8 10.6V13.6M5.4 12.6L8 11.2L10.6 12.6" stroke="#1a1a3a" stroke-width="0.9" fill="none"/></svg>
<svg class="a" style="left:214px;top:130px" width="15" height="16" viewBox="0 0 15 16"><polygon points="4.4,5 9.6,3.4 9.6,12.4 4.4,13.6" fill="#a83ad8" stroke="#4a0a6a" stroke-width="0.8"/><path d="M0.6 0.8L4.6 4.6M1.8 4.8H4.8V1.8" stroke="#111" stroke-width="1.2" fill="none"/><path d="M14.6 15.6L10.4 11.6M13.2 11.6H10.2V14.6" stroke="#111" stroke-width="1.2" fill="none"/></svg>
<svg class="a" style="left:296px;top:130px" width="15" height="16" viewBox="0 0 15 16"><polygon points="4.4,5 9.6,3.4 9.6,12.4 4.4,13.6" fill="#b4b4b4" stroke="#a8a8a8" stroke-width="0.8"/><path d="M0.6 0.8L4.6 4.6M1.8 4.8H4.8V1.8" stroke="#b0b0b0" stroke-width="1.2" fill="none"/><path d="M14.6 15.6L10.4 11.6M13.2 11.6H10.2V14.6" stroke="#b0b0b0" stroke-width="1.2" fill="none"/></svg>
<svg class="a" style="left:383px;top:130px" width="16" height="16" viewBox="0 0 16 16"><polygon points="4.6,1 15.4,1 11.6,7 0.8,7" fill="#a4a4a4"/><polygon points="4.6,8.6 15.4,8.6 11.6,14.6 0.8,14.6" fill="#f4f4f4" stroke="#a4a4a4" stroke-width="1"/><path d="M11.6 7V14.6M15.4 1V8.6" stroke="#a4a4a4" stroke-width="1"/></svg>
<svg class="a" style="left:476px;top:133px" width="16" height="12" viewBox="0 0 16 12"><rect x="0" y="1" width="4.4" height="10" fill="#a8a8a8"/><rect x="11.6" y="1" width="4.4" height="10" fill="#a8a8a8"/><path d="M4 4H11M8.8 2L11.2 4L8.8 6M12 8H5M7.2 6L4.8 8L7.2 10" stroke="#a8a8a8" stroke-width="1.2" fill="none"/></svg>
<svg class="a" style="left:602px;top:129px" width="17" height="17" viewBox="0 0 17 17"><g transform="translate(0.6 0.6)"><polygon points="0,2.4 4,0 10.4,2 6.4,4.6" fill="#b8c4d8" stroke="#1a2438" stroke-width="0.8"/><polygon points="0,2.4 6.4,4.6 6.4,7.6 0,5.2" fill="#5a6a88" stroke="#1a2438" stroke-width="0.8"/><polygon points="6.4,4.6 10.4,2 10.4,5 6.4,7.6" fill="#8a98b4" stroke="#1a2438" stroke-width="0.8"/></g><path d="M5.6 8.8L12 11.2" stroke="#c01818" stroke-width="1.1"/><polygon points="14.6,12 11,12.6 12.4,9.8" fill="#c01818"/><path d="M3.6 13.2H16.4" stroke="#111" stroke-width="1.2"/><path d="M6.4 13.4L4.4 16.4M9.4 13.4L7.4 16.4M12.4 13.4L10.4 16.4M15.4 13.4L13.4 16.4" stroke="#111" stroke-width="1"/></svg>
<svg class="a" style="left:714px;top:129px" width="18" height="17" viewBox="0 0 18 17"><g transform="translate(0.6 0.4)"><polygon points="0,2.4 4,0 10.4,2 6.4,4.6" fill="#b8c4d8" stroke="#1a2438" stroke-width="0.8"/><polygon points="0,2.4 6.4,4.6 6.4,7.6 0,5.2" fill="#5a6a88" stroke="#1a2438" stroke-width="0.8"/><polygon points="6.4,4.6 10.4,2 10.4,5 6.4,7.6" fill="#8a98b4" stroke="#1a2438" stroke-width="0.8"/></g><g transform="translate(6.6 8.6)"><polygon points="0,2.4 4,0 10.4,2 6.4,4.6" fill="#b8c4d8" stroke="#1a2438" stroke-width="0.8"/><polygon points="0,2.4 6.4,4.6 6.4,7.6 0,5.2" fill="#5a6a88" stroke="#1a2438" stroke-width="0.8"/><polygon points="6.4,4.6 10.4,2 10.4,5 6.4,7.6" fill="#8a98b4" stroke="#1a2438" stroke-width="0.8"/></g><path d="M7.6 6.4V11" stroke="#c01818" stroke-width="1.2"/><polygon points="7.6,13.4 5.4,10.2 9.8,10.2" fill="#c01818"/></svg>
<svg class="a" style="left:815px;top:131px" width="16" height="16" viewBox="0 0 16 16"><rect x="0.6" y="0.6" width="14.8" height="14.8" fill="#fff" stroke="#1a2a8a" stroke-width="1.2"/><path d="M8 0.6V15.4" stroke="#1a2a8a" stroke-width="1.4"/><rect x="2.6" y="3" width="3.4" height="10" rx="1.4" fill="#d02a2a" stroke="#5a0a0a" stroke-width="0.6"/><rect x="3.4" y="6.6" width="1.8" height="2.6" fill="#fff"/><path d="M10 3L13.4 12.6" stroke="#2a4ac8" stroke-width="3" stroke-linecap="round"/><path d="M10.6 5L12.8 11" stroke="#d8e4ff" stroke-width="0.8"/></svg>
<svg class="a" style="left:908px;top:130px" width="14" height="16" viewBox="0 0 14 16"><path d="M3.6 7V4.4A3.4 3.4 0 0 1 10.4 4.4V7" fill="none" stroke="#8a7a2a" stroke-width="1.6"/><rect x="0.8" y="6.8" width="12.4" height="8.6" rx="1" fill="#f2cc3a" stroke="#8a6a0a" stroke-width="1"/><rect x="6" y="9.2" width="2" height="3.6" fill="#5a4408"/></svg>
<svg class="a" style="left:1007px;top:131px" width="17" height="16" viewBox="0 0 17 16"><path d="M0.8 0.8H9V14.4H0.8Z" fill="#fff" stroke="#222" stroke-width="1.1"/><path d="M2.6 3.4H7.2M2.6 5.6H7.2M2.6 7.8H7.2M2.6 10H7.2M2.6 12.2H5.4" stroke="#222" stroke-width="1"/><path d="M15.6 8H12.4Q10.6 8 10.6 10V12Q10.6 14 12.4 14H15.6" stroke="#d81818" stroke-width="2.6" fill="none"/></svg>
<div class="a" style="left:0px;top:151px;width:306px;height:846px;background:#f0f0f0;"></div>
<div class="a" style="left:0px;top:151px;width:306px;height:22px;background:linear-gradient(90deg,#bccad9 0%,#c8d5e2 55%,#d7e2ee 100%);"></div>
<div class="a" style="left:0px;top:171px;width:306px;height:1px;background:#8d949c;"></div>
<div class="a" style="left:0px;top:172px;width:306px;height:1px;background:#6f7377;"></div>
<div class="t" style="left:2.50px;top:156px;font-size:12.0px;color:#1a1a1a;letter-spacing:0.140px;transform:scaleY(1.0833);transform-origin:0 10px;">Outline</div>
<svg class="a" style="left:294px;top:156px" width="8" height="10" viewBox="0 0 8 10"><path d="M1.5 0.5H6.5M2.5 0.5V5M5.5 0.5V5M0.5 5.5H7.5M4 6V10" stroke="#000" stroke-width="1.2" fill="none"/><rect x="4.5" y="1" width="1.5" height="4" fill="#000"/></svg>
<div class="a" style="left:2px;top:176px;width:1px;height:19px;background:#ffffff;"></div>
<div class="a" style="left:3px;top:176px;width:1px;height:19px;background:#a0a0a0;"></div>
<div class="a" style="left:1px;top:194px;width:3px;height:1px;background:#a0a0a0;"></div>
<div class="t" style="left:9.50px;top:180px;font-size:12.0px;color:#151515;letter-spacing:-0.214px;transform:scaleY(1.0833);transform-origin:0 10px;">Filter:</div>
<div class="a" style="left:47px;top:177px;width:96px;height:18px;background:#ffffff;"></div>
<div class="a" style="left:129px;top:178px;width:14px;height:17px;background:#f0f0f0;"></div>
<div class="t" style="left:50.50px;top:181px;font-size:11.5px;color:#151515;letter-spacing:-0.294px;">Name</div>
<svg class="a" style="left:131px;top:185px" width="7" height="4" viewBox="0 0 7 4"><path d="M0 0H7L3.5 4Z" fill="#000"/></svg>
<div class="a" style="left:151px;top:178px;width:144px;height:16px;background:#ffffff;"></div>
<div class="a" style="left:0px;top:197px;width:306px;height:1px;background:#a8a8a8;"></div>
<div class="a" style="left:0px;top:198px;width:306px;height:1px;background:#ffffff;"></div>
<div class="a" style="left:2px;top:201px;width:1px;height:18px;background:#ffffff;"></div>
<div class="a" style="left:3px;top:201px;width:1px;height:18px;background:#a0a0a0;"></div>
<div class="a" style="left:1px;top:218px;width:3px;height:1px;background:#a0a0a0;"></div>
<div class="a" style="left:0px;top:222px;width:306px;height:389px;background:#ffffff;"></div>
<div class="a" style="left:133px;top:333px;width:115px;height:16px;background:#efefef;"></div>
<div class="t" style="left:29.50px;top:224px;font-size:12.34px;color:#0a0a0a;letter-spacing:-0.011px;transform:scaleY(0.94);transform-origin:0 10px;font-weight:700;">Project*</div>
<div class="t" style="left:56.60px;top:240px;font-size:12.34px;color:#0a0a0a;letter-spacing:-0.301px;transform:scaleY(0.94);transform-origin:0 10px;font-weight:700;">Model (C4)</div>
<div class="t" style="left:82.50px;top:257px;font-size:11.0px;color:#111;letter-spacing:-0.186px;transform:scaleY(1.055);transform-origin:0 9px;">Geometry</div>
<div class="t" style="left:82.50px;top:273px;font-size:11.0px;color:#111;letter-spacing:-0.191px;transform:scaleY(1.055);transform-origin:0 9px;">Materials</div>
<div class="t" style="left:82.50px;top:289px;font-size:11.0px;color:#111;letter-spacing:-0.180px;transform:scaleY(1.055);transform-origin:0 9px;">Coordinate Systems</div>
<div class="t" style="left:82.50px;top:305px;font-size:11.0px;color:#111;letter-spacing:-0.223px;transform:scaleY(1.055);transform-origin:0 9px;">Connections</div>
<div class="t" style="left:109.80px;top:321px;font-size:11.0px;color:#111;letter-spacing:-0.126px;transform:scaleY(1.055);transform-origin:0 9px;">Contacts</div>
<div class="t" style="left:136.40px;top:337px;font-size:11.0px;color:#111;letter-spacing:-0.276px;transform:scaleY(1.055);transform-origin:0 9px;">Bonded - Solid To Solid</div>
<div class="t" style="left:82.50px;top:353px;font-size:11.0px;color:#111;letter-spacing:-0.550px;transform:scaleY(1.055);transform-origin:0 9px;">Mesh</div>
<div class="t" style="left:82.90px;top:368px;font-size:12.34px;color:#0a0a0a;letter-spacing:-0.119px;transform:scaleY(0.94);transform-origin:0 10px;font-weight:700;">Static Structural (C5)</div>
<div class="t" style="left:109.80px;top:385px;font-size:11.0px;color:#111;letter-spacing:-0.198px;transform:scaleY(1.055);transform-origin:0 9px;">Analysis Settings</div>
<div class="t" style="left:109.80px;top:400px;font-size:12.34px;color:#0a0a0a;letter-spacing:-0.307px;transform:scaleY(0.94);transform-origin:0 10px;font-weight:700;">Solution (C6)</div>
<div class="t" style="left:136.40px;top:417px;font-size:11.0px;color:#111;letter-spacing:-0.042px;transform:scaleY(1.055);transform-origin:0 9px;">Solution Information</div>
<div class="a" style="left:12px;top:237px;width:1px;height:6px;background:repeating-linear-gradient(180deg,#9a9a9a 0 1px,transparent 1px 2px);"></div>
<div class="a" style="left:18px;top:246px;width:10px;height:1px;background:repeating-linear-gradient(90deg,#9a9a9a 0 1px,transparent 1px 2px);"></div>
<div class="a" style="left:39px;top:253px;width:1px;height:120px;background:repeating-linear-gradient(180deg,#9a9a9a 0 1px,transparent 1px 2px);"></div>
<div class="a" style="left:45px;top:262px;width:8px;height:1px;background:repeating-linear-gradient(90deg,#9a9a9a 0 1px,transparent 1px 2px);"></div>
<div class="a" style="left:45px;top:278px;width:8px;height:1px;background:repeating-linear-gradient(90deg,#9a9a9a 0 1px,transparent 1px 2px);"></div>
<div class="a" style="left:45px;top:294px;width:8px;height:1px;background:repeating-linear-gradient(90deg,#9a9a9a 0 1px,transparent 1px 2px);"></div>
<div class="a" style="left:45px;top:310px;width:8px;height:1px;background:repeating-linear-gradient(90deg,#9a9a9a 0 1px,transparent 1px 2px);"></div>
<div class="a" style="left:45px;top:374px;width:8px;height:1px;background:repeating-linear-gradient(90deg,#9a9a9a 0 1px,transparent 1px 2px);"></div>
<div class="a" style="left:40px;top:358px;width:13px;height:1px;background:repeating-linear-gradient(90deg,#9a9a9a 0 1px,transparent 1px 2px);"></div>
<div class="a" style="left:66px;top:318px;width:1px;height:4px;background:repeating-linear-gradient(180deg,#9a9a9a 0 1px,transparent 1px 2px);"></div>
<div class="a" style="left:72px;top:326px;width:8px;height:1px;background:repeating-linear-gradient(90deg,#9a9a9a 0 1px,transparent 1px 2px);"></div>
<div class="a" style="left:93px;top:333px;width:1px;height:9px;background:repeating-linear-gradient(180deg,#9a9a9a 0 1px,transparent 1px 2px);"></div>
<div class="a" style="left:94px;top:342px;width:14px;height:1px;background:repeating-linear-gradient(90deg,#9a9a9a 0 1px,transparent 1px 2px);"></div>
<div class="a" style="left:66px;top:381px;width:1px;height:20px;background:repeating-linear-gradient(180deg,#9a9a9a 0 1px,transparent 1px 2px);"></div>
<div class="a" style="left:67px;top:390px;width:13px;height:1px;background:repeating-linear-gradient(90deg,#9a9a9a 0 1px,transparent 1px 2px);"></div>
<div class="a" style="left:72px;top:406px;width:8px;height:1px;background:repeating-linear-gradient(90deg,#9a9a9a 0 1px,transparent 1px 2px);"></div>
<div class="a" style="left:93px;top:413px;width:1px;height:9px;background:repeating-linear-gradient(180deg,#9a9a9a 0 1px,transparent 1px 2px);"></div>
<div class="a" style="left:94px;top:422px;width:14px;height:1px;background:repeating-linear-gradient(90deg,#9a9a9a 0 1px,transparent 1px 2px);"></div>
<svg class="a" style="left:8px;top:242px" width="9" height="9" viewBox="0 0 9 9"><rect x="0.5" y="0.5" width="8" height="8" fill="#fff" stroke="#848484"/><path d="M2 4.5H7" stroke="#000"/></svg>
<svg class="a" style="left:35px;top:258px" width="9" height="9" viewBox="0 0 9 9"><rect x="0.5" y="0.5" width="8" height="8" fill="#fff" stroke="#848484"/><path d="M2 4.5H7" stroke="#000"/><path d="M4.5 2V7" stroke="#000"/></svg>
<svg class="a" style="left:35px;top:274px" width="9" height="9" viewBox="0 0 9 9"><rect x="0.5" y="0.5" width="8" height="8" fill="#fff" stroke="#848484"/><path d="M2 4.5H7" stroke="#000"/><path d="M4.5 2V7" stroke="#000"/></svg>
<svg class="a" style="left:35px;top:290px" width="9" height="9" viewBox="0 0 9 9"><rect x="0.5" y="0.5" width="8" height="8" fill="#fff" stroke="#848484"/><path d="M2 4.5H7" stroke="#000"/><path d="M4.5 2V7" stroke="#000"/></svg>
<svg class="a" style="left:35px;top:306px" width="9" height="9" viewBox="0 0 9 9"><rect x="0.5" y="0.5" width="8" height="8" fill="#fff" stroke="#848484"/><path d="M2 4.5H7" stroke="#000"/></svg>
<svg class="a" style="left:35px;top:370px" width="9" height="9" viewBox="0 0 9 9"><rect x="0.5" y="0.5" width="8" height="8" fill="#fff" stroke="#848484"/><path d="M2 4.5H7" stroke="#000"/></svg>
<svg class="a" style="left:62px;top:322px" width="9" height="9" viewBox="0 0 9 9"><rect x="0.5" y="0.5" width="8" height="8" fill="#fff" stroke="#848484"/><path d="M2 4.5H7" stroke="#000"/></svg>
<svg class="a" style="left:62px;top:402px" width="9" height="9" viewBox="0 0 9 9"><rect x="0.5" y="0.5" width="8" height="8" fill="#fff" stroke="#848484"/><path d="M2 4.5H7" stroke="#000"/></svg>
<div class="a" style="left:0px;top:611px;width:306px;height:18px;background:#f0f0f0;"></div>
<div class="a" style="left:17px;top:613px;width:257px;height:14px;background:#cdcdcd;"></div>
<svg class="a" style="left:5px;top:615px" width="8" height="10" viewBox="0 0 8 10"><path d="M6 1L2 5L6 9" stroke="#505050" stroke-width="2" fill="none"/></svg>
<svg class="a" style="left:293px;top:615px" width="8" height="10" viewBox="0 0 8 10"><path d="M2 1L6 5L2 9" stroke="#505050" stroke-width="2" fill="none"/></svg>
<div class="a" style="left:0px;top:634px;width:306px;height:22px;background:linear-gradient(90deg,#bccad9 0%,#c8d5e2 55%,#d7e2ee 100%);"></div>
<div class="a" style="left:0px;top:654px;width:306px;height:1px;background:#8d949c;"></div>
<div class="a" style="left:0px;top:655px;width:306px;height:1px;background:#6f7377;"></div>
<div class="t" style="left:2.50px;top:639px;font-size:12.0px;color:#1a1a1a;letter-spacing:0.183px;transform:scaleY(1.0833);transform-origin:0 10px;">Details of &quot;Bonded - Solid To Solid&quot;</div>
<svg class="a" style="left:295px;top:639px" width="8" height="10" viewBox="0 0 8 10"><path d="M1.5 0.5H6.5M2.5 0.5V5M5.5 0.5V5M0.5 5.5H7.5M4 6V10" stroke="#000" stroke-width="1.2" fill="none"/><rect x="4.5" y="1" width="1.5" height="4" fill="#000"/></svg>
<div class="a" style="left:0px;top:656px;width:288px;height:198px;background:#ffffff;"></div>
<div class="a" style="left:13px;top:656px;width:1px;height:198px;background:#a6a6a6;"></div>
<div class="a" style="left:287px;top:656px;width:1px;height:198px;background:#a6a6a6;"></div>
<div class="t" style="left:17.00px;top:659px;font-size:11.0px;color:#000;letter-spacing:-0.402px;font-weight:700;">Scope</div>
<svg class="a" style="left:2px;top:661px" width="9" height="9" viewBox="0 0 9 9"><rect x="0.5" y="0.5" width="8" height="8" fill="#fff" stroke="#848484"/><path d="M2 4.5H7" stroke="#000"/></svg>
<div class="a" style="left:13px;top:674px;width:275px;height:1px;background:#a6a6a6;"></div>
<div class="t" style="left:17.00px;top:677px;font-size:11.0px;color:#111;letter-spacing:0.357px;transform:scaleY(1.055);transform-origin:0 9px;">Scoping Method</div>
<div class="t" style="left:175.00px;top:677px;font-size:11.0px;color:#111;letter-spacing:0.189px;transform:scaleY(1.055);transform-origin:0 9px;">Geometry Selection</div>
<div class="a" style="left:171px;top:674px;width:1px;height:18px;background:#a6a6a6;"></div>
<div class="a" style="left:13px;top:692px;width:275px;height:1px;background:#a6a6a6;"></div>
<div class="t" style="left:17.00px;top:695px;font-size:11.0px;color:#111;letter-spacing:0.156px;transform:scaleY(1.055);transform-origin:0 9px;">Contact</div>
<div class="t" style="left:175.00px;top:695px;font-size:11.0px;color:#111;letter-spacing:0.209px;transform:scaleY(1.055);transform-origin:0 9px;">1 Body</div>
<div class="a" style="left:171px;top:692px;width:1px;height:18px;background:#a6a6a6;"></div>
<div class="a" style="left:13px;top:710px;width:275px;height:1px;background:#a6a6a6;"></div>
<div class="t" style="left:17.00px;top:713px;font-size:11.0px;color:#111;letter-spacing:0.405px;transform:scaleY(1.055);transform-origin:0 9px;">Target</div>
<div class="t" style="left:175.00px;top:713px;font-size:11.0px;color:#111;letter-spacing:0.209px;transform:scaleY(1.055);transform-origin:0 9px;">1 Body</div>
<div class="a" style="left:171px;top:710px;width:1px;height:18px;background:#a6a6a6;"></div>
<div class="a" style="left:13px;top:728px;width:275px;height:1px;background:#a6a6a6;"></div>
<div class="a" style="left:172px;top:729px;width:115px;height:17px;background:#ff4f4f;"></div>
<div class="t" style="left:17.00px;top:731px;font-size:11.0px;color:#111;letter-spacing:0.136px;transform:scaleY(1.055);transform-origin:0 9px;">Contact Bodies</div>
<div class="t" style="left:175.00px;top:731px;font-size:11.0px;color:#3a0000;letter-spacing:0.208px;transform:scaleY(1.055);transform-origin:0 9px;">Solid</div>
<div class="a" style="left:171px;top:728px;width:1px;height:18px;background:#a6a6a6;"></div>
<div class="a" style="left:13px;top:746px;width:275px;height:1px;background:#a6a6a6;"></div>
<div class="a" style="left:172px;top:747px;width:115px;height:17px;background:#5c5cff;"></div>
<div class="t" style="left:17.00px;top:749px;font-size:11.0px;color:#111;letter-spacing:0.249px;transform:scaleY(1.055);transform-origin:0 9px;">Target Bodies</div>
<div class="t" style="left:175.00px;top:749px;font-size:11.0px;color:#00003a;letter-spacing:0.208px;transform:scaleY(1.055);transform-origin:0 9px;">Solid</div>
<div class="a" style="left:171px;top:746px;width:1px;height:18px;background:#a6a6a6;"></div>
<div class="a" style="left:13px;top:764px;width:275px;height:1px;background:#a6a6a6;"></div>
<div class="t" style="left:17.00px;top:767px;font-size:11.0px;color:#111;letter-spacing:0.213px;transform:scaleY(1.055);transform-origin:0 9px;">Protected</div>
<div class="t" style="left:175.00px;top:767px;font-size:11.0px;color:#111;letter-spacing:0.219px;transform:scaleY(1.055);transform-origin:0 9px;">No</div>
<div class="a" style="left:171px;top:764px;width:1px;height:18px;background:#a6a6a6;"></div>
<div class="a" style="left:13px;top:782px;width:275px;height:1px;background:#a6a6a6;"></div>
<div class="t" style="left:17.00px;top:785px;font-size:11.0px;color:#000;letter-spacing:0.179px;font-weight:700;">Definition</div>
<svg class="a" style="left:2px;top:787px" width="9" height="9" viewBox="0 0 9 9"><rect x="0.5" y="0.5" width="8" height="8" fill="#fff" stroke="#848484"/><path d="M2 4.5H7" stroke="#000"/></svg>
<div class="a" style="left:13px;top:800px;width:275px;height:1px;background:#a6a6a6;"></div>
<div class="t" style="left:17.00px;top:803px;font-size:11.0px;color:#111;letter-spacing:0.163px;transform:scaleY(1.055);transform-origin:0 9px;">Type</div>
<div class="t" style="left:175.00px;top:803px;font-size:11.0px;color:#111;letter-spacing:0.096px;transform:scaleY(1.055);transform-origin:0 9px;">Bonded</div>
<div class="a" style="left:171px;top:800px;width:1px;height:18px;background:#a6a6a6;"></div>
<div class="a" style="left:13px;top:818px;width:275px;height:1px;background:#a6a6a6;"></div>
<div class="a" style="left:172px;top:819px;width:115px;height:17px;background:#e9e9e6;"></div>
<div class="t" style="left:17.00px;top:821px;font-size:11.0px;color:#111;letter-spacing:0.324px;transform:scaleY(1.055);transform-origin:0 9px;">Scope Mode</div>
<div class="t" style="left:175.00px;top:821px;font-size:11.0px;color:#111;letter-spacing:0.070px;transform:scaleY(1.055);transform-origin:0 9px;">Manual</div>
<div class="a" style="left:171px;top:818px;width:1px;height:18px;background:#a6a6a6;"></div>
<div class="a" style="left:13px;top:836px;width:275px;height:1px;background:#a6a6a6;"></div>
<div class="t" style="left:17.00px;top:839px;font-size:11.0px;color:#111;letter-spacing:-0.052px;transform:scaleY(1.055);transform-origin:0 9px;">Behavior</div>
<div class="t" style="left:175.00px;top:839px;font-size:11.0px;color:#111;letter-spacing:0.340px;transform:scaleY(1.055);transform-origin:0 9px;">Program Controlled</div>
<div class="a" style="left:171px;top:836px;width:1px;height:18px;background:#a6a6a6;"></div>
<div class="a" style="left:13px;top:854px;width:275px;height:1px;background:#a6a6a6;"></div>
<div class="a" style="left:288px;top:656px;width:18px;height:198px;background:#f0f0f0;"></div>
<div class="a" style="left:291px;top:673px;width:13px;height:72px;background:#cdcdcd;"></div>
<svg class="a" style="left:292px;top:660px" width="10" height="8" viewBox="0 0 10 8"><path d="M1 6L5 2L9 6" stroke="#505050" stroke-width="2" fill="none"/></svg>
<svg class="a" style="left:292px;top:842px" width="10" height="8" viewBox="0 0 10 8"><path d="M1 2L5 6L9 2" stroke="#505050" stroke-width="2" fill="none"/></svg>
<div class="a" style="left:0px;top:860px;width:306px;height:22px;background:linear-gradient(90deg,#bccad9 0%,#c8d5e2 55%,#d7e2ee 100%);"></div>
<div class="a" style="left:0px;top:880px;width:306px;height:1px;background:#8d949c;"></div>
<div class="a" style="left:0px;top:881px;width:306px;height:1px;background:#6f7377;"></div>
<div class="t" style="left:2.50px;top:865px;font-size:12.0px;color:#1a1a1a;letter-spacing:-0.182px;transform:scaleY(1.0833);transform-origin:0 10px;">Section Planes</div>
<svg class="a" style="left:279px;top:865px" width="8" height="10" viewBox="0 0 8 10"><path d="M1.5 0.5H6.5M2.5 0.5V5M5.5 0.5V5M0.5 5.5H7.5M4 6V10" stroke="#000" stroke-width="1.2" fill="none"/><rect x="4.5" y="1" width="1.5" height="4" fill="#000"/></svg>
<svg class="a" style="left:293px;top:866px" width="9" height="9" viewBox="0 0 9 9"><path d="M1 1L8 8M8 1L1 8" stroke="#000" stroke-width="1.6" fill="none"/></svg>
<div class="a" style="left:2px;top:886px;width:1px;height:18px;background:#ffffff;"></div>
<div class="a" style="left:3px;top:886px;width:1px;height:18px;background:#a0a0a0;"></div>
<div class="a" style="left:1px;top:903px;width:3px;height:1px;background:#a0a0a0;"></div>
<div class="a" style="left:0px;top:907px;width:306px;height:90px;background:#ffffff;border:1px solid #6e6e6e;box-sizing:border-box;"></div>
<svg class="a" style="left:8px;top:222px" width="16" height="16" viewBox="0 0 16 16"><path d="M0.6 3.6L1.8 1H6.4L7.6 3.2H14.4V14.4H0.6Z" fill="#f6eea0" stroke="#5a4a10" stroke-width="0.8"/><path d="M0.8 14.6H14.6V3.6" stroke="#2a2408" stroke-width="1.1" fill="none"/><rect x="3.4" y="4.6" width="8.6" height="8.4" fill="#1f8a8a" stroke="#0a3a3a" stroke-width="0.9"/><rect x="5.8" y="6.4" width="4.6" height="2.2" fill="#bff"/><path d="M3.4 6H2.2M3.4 8H2.2M3.4 10H2.2M3.4 12H2.2" stroke="#222" stroke-width="0.8"/></svg>
<svg class="a" style="left:35px;top:238px" width="16" height="16" viewBox="0 0 16 16"><path d="M0.6 3.6L1.8 1H6.4L7.6 3.2H14.4V14.4H0.6Z" fill="#f6eea0" stroke="#5a4a10" stroke-width="0.8"/><path d="M0.8 14.6H14.6V3.6" stroke="#2a2408" stroke-width="1.1" fill="none"/><polygon points="3,7.6 7.6,5.4 12.4,7.6 7.6,9.8" fill="#8aa6ea" stroke="#0a144a" stroke-width="0.9"/><polygon points="3,7.6 7.6,9.8 7.6,13.4 3,11" fill="#4a6ad0" stroke="#0a144a" stroke-width="0.9"/><polygon points="7.6,9.8 12.4,7.6 12.4,11 7.6,13.4" fill="#2a4ab8" stroke="#0a144a" stroke-width="0.9"/></svg>
<svg class="a" style="left:62px;top:254px" width="16" height="15" viewBox="0 0 16 15"><g transform="translate(0.4 0.4) scale(1.12)"><polygon points="0,2.4 4,0 8,2.4 4,4.8" fill="#9ab4f0" stroke="#0a144a" stroke-width="0.8"/><polygon points="0,2.4 4,4.8 4,9.6 0,7.2" fill="#5a7ad8" stroke="#0a144a" stroke-width="0.8"/><polygon points="4,4.8 8,2.4 8,7.2 4,9.6" fill="#3a5ac8" stroke="#0a144a" stroke-width="0.8"/></g><g transform="translate(6.4 3.4) scale(1.12)"><polygon points="0,2.4 4,0 8,2.4 4,4.8" fill="#9ab4f0" stroke="#0a144a" stroke-width="0.8"/><polygon points="0,2.4 4,4.8 4,9.6 0,7.2" fill="#5a7ad8" stroke="#0a144a" stroke-width="0.8"/><polygon points="4,4.8 8,2.4 8,7.2 4,9.6" fill="#3a5ac8" stroke="#0a144a" stroke-width="0.8"/></g></svg>
<svg class="a" style="left:53px;top:262px" width="10" height="9" viewBox="0 0 10 9"><path d="M1.4 5.2L3.6 7.8L8.8 1.4" stroke="#1a8a2a" stroke-width="1.6" fill="none"/></svg>
<svg class="a" style="left:62px;top:269px" width="16" height="16" viewBox="0 0 16 16"><path d="M0.6 3.6L1.8 1H6.4L7.6 3.2H14.4V14.4H0.6Z" fill="#f6eea0" stroke="#5a4a10" stroke-width="0.8"/><path d="M0.8 14.6H14.6V3.6" stroke="#2a2408" stroke-width="1.1" fill="none"/><path d="M3 3.4C2 1.6 4.4 0.8 5.2 2.6" stroke="#5a3a2a" stroke-width="0.8" fill="none"/><path d="M4 4.4L7.6 4L13 9.4L9.6 12.8L4.2 7.6Z" fill="#c49a88" stroke="#5a3a2a" stroke-width="0.8"/><circle cx="5.8" cy="5.8" r="0.9" fill="#fff"/></svg>
<svg class="a" style="left:53px;top:278px" width="10" height="9" viewBox="0 0 10 9"><path d="M1.4 5.2L3.6 7.8L8.8 1.4" stroke="#1a8a2a" stroke-width="1.6" fill="none"/></svg>
<svg class="a" style="left:62px;top:284px" width="17" height="17" viewBox="0 0 17 17"><path d="M8.5 9.5V1.4" stroke="#1aa03a" stroke-width="1.6"/><polygon points="8.5,0 6.4,3.6 10.6,3.6" fill="#1aa03a"/><path d="M8.5 9.5L1.6 14" stroke="#1a1ac8" stroke-width="1.8"/><path d="M8.5 9.5L15.6 13.6" stroke="#d01818" stroke-width="1.8"/><path d="M8.5 9.5L2.4 5.6M8.5 9.5L14.8 5.4M8.5 9.5V16.4" stroke="#8ab8b0" stroke-width="1"/></svg>
<svg class="a" style="left:53px;top:294px" width="10" height="9" viewBox="0 0 10 9"><path d="M1.4 5.2L3.6 7.8L8.8 1.4" stroke="#1a8a2a" stroke-width="1.6" fill="none"/></svg>
<svg class="a" style="left:62px;top:302px" width="16" height="15" viewBox="0 0 16 15"><path d="M1 4.2L7.6 0.8L14.6 4.2V10.6L7.6 14.2L1 10.6ZM1 4.2L7.6 7.4L14.6 4.2M7.6 7.4V14.2" fill="#fff" stroke="#111" stroke-width="1" stroke-dasharray="2.2 0.9"/><polygon points="4.6,4.4 8.4,3 8.4,10.8 4.6,12" fill="#a03ad0" stroke="#3a0a5a" stroke-width="0.7"/></svg>
<svg class="a" style="left:53px;top:310px" width="10" height="9" viewBox="0 0 10 9"><path d="M1.4 5.2L3.6 7.8L8.8 1.4" stroke="#1a8a2a" stroke-width="1.6" fill="none"/></svg>
<svg class="a" style="left:62px;top:350px" width="16" height="15" viewBox="0 0 16 15"><path d="M0.8 3.4L4.6 0.8L8.6 3.4V8.8L4.6 11.6L0.8 8.8ZM0.8 3.4L4.6 5.8L8.6 3.4M4.6 5.8V11.6M2.7 2.1L6.6 4.6M6.6 2.1L2.7 4.6" fill="#fff" stroke="#14145a" stroke-width="0.9"/><path d="M6.8 5.8L10.8 3L15 5.8V11.4L10.8 14.2L6.8 11.4ZM6.8 5.8L10.8 8.4L15 5.8M10.8 8.4V14.2M8.8 9.8L10.8 8.4L12.9 9.8" fill="#fff" stroke="#14145a" stroke-width="0.9"/></svg>
<svg class="a" style="left:54px;top:354px" width="9" height="13" viewBox="0 0 9 13"><polygon points="6,0 1.6,5.2 4,5.2 0.4,9.6 3,9.6 0,13 6.6,7 4.2,7 8,2.8 5.6,2.8 8.6,0" fill="#f4e23a" stroke="#b8a81a" stroke-width="0.5"/></svg>
<svg class="a" style="left:62px;top:365px" width="16" height="16" viewBox="0 0 16 16"><path d="M0.6 3.6L1.8 1H6.4L7.6 3.2H14.4V14.4H0.6Z" fill="#9be88a" stroke="#2a6a1a" stroke-width="0.8"/><path d="M0.8 14.6H14.6V3.6" stroke="#1a4a0a" stroke-width="1.1" fill="none"/><path d="M3.4 8.6H11.6" stroke="#1a6a1a" stroke-width="1.3"/></svg>
<svg class="a" style="left:55px;top:370px" width="8" height="11" viewBox="0 0 8 11"><text x="0" y="10" font-family="Liberation Sans" font-weight="700" font-size="12.5" fill="#141a6a">?</text></svg>
<svg class="a" style="left:89px;top:317px" width="16" height="16" viewBox="0 0 16 16"><path d="M0.6 3.4L1.8 1.2H6.2L7.4 3.4H15.4V15.4H0.6Z" fill="#f7efa0" stroke="#6a5a10" stroke-width="0.9"/><path d="M0.6 15.4H15.4" stroke="#3a3008" stroke-width="1.2"/><ellipse cx="8" cy="8.8" rx="5.2" ry="3.8" fill="#e8e0f0" stroke="#1a1a3a" stroke-width="1"/><circle cx="8" cy="8.4" r="2.2" fill="#9a3ac8" stroke="#2a0a4a" stroke-width="0.7"/><path d="M8 10.6V13.6M5.4 12.6L8 11.2L10.6 12.6" stroke="#1a1a3a" stroke-width="0.9" fill="none"/></svg>
<svg class="a" style="left:80px;top:326px" width="10" height="9" viewBox="0 0 10 9"><path d="M1.4 5.2L3.6 7.8L8.8 1.4" stroke="#1a8a2a" stroke-width="1.6" fill="none"/></svg>
<svg class="a" style="left:116px;top:333px" width="15" height="16" viewBox="0 0 15 16"><polygon points="4.4,5 9.6,3.4 9.6,12.4 4.4,13.6" fill="#a83ad8" stroke="#4a0a6a" stroke-width="0.8"/><path d="M0.6 0.8L4.6 4.6M1.8 4.8H4.8V1.8" stroke="#111" stroke-width="1.2" fill="none"/><path d="M14.6 15.6L10.4 11.6M13.2 11.6H10.2V14.6" stroke="#111" stroke-width="1.2" fill="none"/></svg>
<svg class="a" style="left:107px;top:342px" width="10" height="9" viewBox="0 0 10 9"><path d="M1.4 5.2L3.6 7.8L8.8 1.4" stroke="#1a8a2a" stroke-width="1.6" fill="none"/></svg>
<svg class="a" style="left:89px;top:381px" width="16" height="16" viewBox="0 0 16 16"><rect x="1.6" y="2.6" width="12.6" height="10" fill="#fafafa" stroke="#b8b8b8" stroke-width="0.8"/><path d="M1.6 12.6C4 9 5 3.4 7 3.4H9C11 3.4 12 9 14.2 12.6" stroke="#2a7a5a" stroke-width="1.1" fill="none"/><path d="M5.6 3V12.6M10.2 3V12.6" stroke="#d8a8a8" stroke-width="0.7"/><path d="M1 0.6H4M6.4 0.6H9.4M11.6 0.6H14.6" stroke="#1a2a9a" stroke-width="1.2"/><polygon points="2.5,2.4 1.4,0.8 3.6,0.8" fill="#1a2a9a"/><polygon points="7.9,2.4 6.8,0.8 9,0.8" fill="#1a2a9a"/><polygon points="13.1,2.4 12,0.8 14.2,0.8" fill="#1a2a9a"/><polygon points="2.5,13.6 1.2,15.6 3.8,15.6" fill="#c01a2a"/><polygon points="7.9,13.6 6.6,15.6 9.2,15.6" fill="#c01a2a"/><polygon points="13.1,13.6 11.8,15.6 14.4,15.6" fill="#c01a2a"/></svg>
<svg class="a" style="left:80px;top:390px" width="10" height="9" viewBox="0 0 10 9"><path d="M1.4 5.2L3.6 7.8L8.8 1.4" stroke="#1a8a2a" stroke-width="1.6" fill="none"/></svg>
<svg class="a" style="left:89px;top:397px" width="16" height="16" viewBox="0 0 16 16"><path d="M0.6 3.6L1.8 1H6.4L7.6 3.2H14.4V14.4H0.6Z" fill="#f6eea0" stroke="#5a4a10" stroke-width="0.8"/><path d="M0.8 14.6H14.6V3.6" stroke="#2a2408" stroke-width="1.1" fill="none"/><polygon points="3,7.4 7.6,5.2 12.4,7.4 7.6,9.6" fill="#2ab04a" stroke="#0a2a1a" stroke-width="0.9"/><polygon points="3,7.4 7.6,9.6 7.6,13.4 3,11" fill="#1a8ad0" stroke="#0a2a1a" stroke-width="0.9"/><polygon points="7.6,9.6 12.4,7.4 12.4,11 7.6,13.4" fill="#e0501a" stroke="#0a2a1a" stroke-width="0.9"/><polygon points="3,9 5,8.4 7.6,9.6 7.6,11.4 3,9.6" fill="#1ab0a0"/></svg>
<svg class="a" style="left:82px;top:402px" width="8" height="11" viewBox="0 0 8 11"><text x="0" y="10" font-family="Liberation Sans" font-weight="700" font-size="12.5" fill="#141a6a">?</text></svg>
<svg class="a" style="left:116px;top:413px" width="16" height="16" viewBox="0 0 16 16"><path d="M0.6 3.6L1.8 1H6.4L7.6 3.2H14.4V14.4H0.6Z" fill="#f8f08a" stroke="#5a4a10" stroke-width="0.8"/><path d="M0.8 14.6H14.6V3.6" stroke="#2a2408" stroke-width="1.1" fill="none"/><ellipse cx="7.6" cy="6.6" rx="1.4" ry="2.6" fill="#1a1ab0"/><path d="M7.6 8.6V10.4" stroke="#1a1ab0" stroke-width="1"/><circle cx="7.6" cy="12.2" r="1" fill="#1a1ab0"/></svg>
<svg class="a" style="left:108px;top:418px" width="9" height="13" viewBox="0 0 9 13"><polygon points="6,0 1.6,5.2 4,5.2 0.4,9.6 3,9.6 0,13 6.6,7 4.2,7 8,2.8 5.6,2.8 8.6,0" fill="#f4e23a" stroke="#b8a81a" stroke-width="0.5"/></svg>
<svg class="a" style="left:14px;top:202px" width="14" height="16" viewBox="0 0 14 16"><path d="M0.6 0.6H9.6L13.4 4.4V15.4H0.6Z" fill="#fff" stroke="#222" stroke-width="1"/><path d="M0.8 15.4H13.4V4.6" stroke="#000" stroke-width="1.3" fill="none"/><path d="M9.6 6.2A3.6 3.6 0 0 0 3.6 7.8" stroke="#2a9a2a" stroke-width="1.5" fill="none"/><polygon points="2.4,5.4 2.8,9.4 5.8,7.8" fill="#2a9a2a"/><path d="M4.4 11.4A3.6 3.6 0 0 0 10.4 9.8" stroke="#2a9a2a" stroke-width="1.5" fill="none"/><polygon points="11.6,12.2 11.2,8.2 8.2,9.8" fill="#2a9a2a"/></svg>
<svg class="a" style="left:37px;top:202px" width="17" height="16" viewBox="0 0 17 16"><path d="M4 2.6H12L16 6.4V15.4H4Z" fill="#fafafa" stroke="#b4b4b4" stroke-width="0.9"/><path d="M4 15.4H16" stroke="#8a8a8a" stroke-width="1.3"/><polygon points="4.6,12.6 12.4,4.8 15.6,15 " fill="#b0b0b0" opacity="0.8"/><polygon points="0.6,9.4 8.4,1.6 12.4,4.8 4.6,12.6" fill="#ededed" stroke="#a8a8a8" stroke-width="0.8"/></svg>
<svg class="a" style="left:61px;top:203px" width="17" height="14" viewBox="0 0 17 14"><path d="M0.4 7H3.4M13.4 7H16.6" stroke="#000" stroke-width="1.1"/><path d="M3.4 0.8V13.2L10 7Z" fill="#fff" stroke="#000" stroke-width="1.1" stroke-linejoin="round"/><circle cx="11.6" cy="7" r="1.9" fill="#fff" stroke="#000" stroke-width="1"/></svg>
<svg class="a" style="left:87px;top:204px" width="12" height="12" viewBox="0 0 12 12"><rect x="0.6" y="0.6" width="10.8" height="10.8" fill="#fff" stroke="#6a6a6a" stroke-width="1"/><path d="M3 6H9M6 3V9" stroke="#000" stroke-width="1.2"/></svg>
<svg class="a" style="left:109px;top:202px" width="16" height="16" viewBox="0 0 16 16"><path d="M0.6 3.6L1.8 1H6.4L7.6 3.2H14.4V14.4H0.6Z" fill="#efe08a" stroke="#5a4a10" stroke-width="0.8"/><path d="M0.8 14.6H14.6V3.6" stroke="#2a2408" stroke-width="1.1" fill="none"/><ellipse cx="5" cy="11" rx="3.2" ry="2.4" fill="#d01a1a" stroke="#5a0a0a" stroke-width="0.6"/><path d="M2.6 11H7.4" stroke="#fff" stroke-width="1"/></svg>
<svg class="a" style="left:135px;top:202px" width="14" height="16" viewBox="0 0 14 16"><text x="0" y="7" font-family="Liberation Sans" font-weight="700" font-size="8.6" fill="#2a3a9a">A</text><text x="0.2" y="15.6" font-family="Liberation Sans" font-weight="700" font-size="8.6" fill="#b01a3a">Z</text><path d="M10.6 0.4V12" stroke="#000" stroke-width="1.4"/><polygon points="10.6,15.6 8,11.2 13.2,11.2" fill="#000"/></svg>
<svg class="a" style="left:13px;top:887px" width="17" height="16" viewBox="0 0 17 16"><defs><pattern id="hat" width="3" height="3" patternUnits="userSpaceOnUse" patternTransform="rotate(-45)"><rect width="3" height="3" fill="#2c45d8"/><rect width="3" height="1" fill="#93a6ff"/></pattern></defs><rect x="9" y="2" width="7.5" height="11.5" fill="url(#hat)" stroke="#1b2a8c" stroke-width="0.6"/><path d="M2.5 6.5V13.5H8.5" stroke="#333" stroke-width="1" fill="none"/><path d="M8.7 0.5V16" stroke="#222" stroke-width="1.1"/><path d="M0 3.5H6M3 0.5V6.5" stroke="#c01414" stroke-width="1.3"/></svg>
<svg class="a" style="left:39px;top:887px" width="14" height="16" viewBox="0 0 14 16"><rect x="0.6" y="3.6" width="6" height="11" fill="#f4f4f4" stroke="#a4a4a4" stroke-width="1"/><rect x="7.6" y="5.6" width="6" height="9" fill="#a4a4a4"/><path d="M3.6 0.6V15.6M1.6 1.6H5.6" stroke="#a4a4a4" stroke-width="1"/></svg>
<svg class="a" style="left:62px;top:888px" width="14" height="14" viewBox="0 0 14 14"><path d="M1 1L13 13M13 1L1 13" stroke="#a4a4a4" stroke-width="1.8"/></svg>
<svg class="a" style="left:85px;top:889px" width="16" height="14" viewBox="0 0 16 14"><text x="0" y="10.6" font-family="Liberation Sans" font-size="11" fill="#a4a4a4" textLength="16" lengthAdjust="spacingAndGlyphs">a|b</text></svg>
<svg class="a" style="left:110px;top:889px" width="16" height="14" viewBox="0 0 16 14"><polygon points="8,1 15.6,8 10,13.6 4.4,12.6 0.4,8" fill="#a4a4a4"/></svg>
<svg class="a" style="left:134px;top:889px" width="16" height="13" viewBox="0 0 16 13"><polygon points="2,0.6 15.6,0.6 13,4 12.4,12.4 9,12.4 9,5 7,5 7,12.4 3.6,12.4 3.6,4.6 0.4,4.6" fill="#a4a4a4"/></svg>
<svg class="a" style="left:158px;top:887px" width="16" height="16" viewBox="0 0 16 16"><polygon points="6,2.4 14.4,0.4 15.6,2.6 11,6 11,15.6 8,15.6 8,6.6 4.4,6" fill="#a4a4a4"/><rect x="0.6" y="9.6" width="6.4" height="6" fill="#a4a4a4"/><polygon points="0.6,8.4 7,8.4 8.6,6.6 2.2,6.6" fill="#a4a4a4"/></svg>
<div class="a" style="left:311px;top:151px;width:1075px;height:554px;background:#f4f6f9;"></div>
<div class="a" style="left:312px;top:152px;width:1072px;height:552px;background:#ffffff;border-left:2px solid #7d7d7d;border-top:2px solid #7d7d7d;box-sizing:border-box;"></div>
<div class="a" style="left:1384px;top:153px;width:1px;height:550px;background:#d8d8d8;"></div>
<div class="t" style="left:329.50px;top:171px;font-size:12.5px;color:#000;letter-spacing:-0.197px;font-weight:700;">Bonded - Solid To Solid</div>
<div class="t" style="left:329.50px;top:187px;font-size:12.0px;color:#000;letter-spacing:0.362px;">2024-08-29</div>
<svg class="a" style="left:400px;top:186px" width="24" height="13" viewBox="0 0 24 13"><g fill="none" stroke="#000" stroke-width="1.15"><ellipse cx="4.9" cy="4.2" rx="3.7" ry="2.9"/><path d="M4.9 7.1V9.4M0.2 9.6H9.9"/><path d="M12.3 1.7H18M15.2 1.8L12.2 6.6M15.2 1.8L18.2 6M20.5 0.6V8.8M18 4.3H20.5M14.6 8V11.6H21.2"/></g></svg>
<div class="t" style="left:428.50px;top:187px;font-size:12.0px;color:#000;letter-spacing:-0.214px;">9:32</div>
<div class="a" style="left:329px;top:217px;width:17px;height:17px;background:#ff3535;border:1px solid #5a1212;box-sizing:border-box;"></div>
<div class="t" style="left:351.00px;top:219px;font-size:12.0px;color:#000;letter-spacing:0.173px;">Bonded - Solid To Solid</div>
<svg class="a" style="left:590px;top:360px" width="520" height="150" viewBox="0 0 520 150"><polygon points="57.4,88.7 99.9,84.8 437.6,69.6 481.2,68.3 497.6,66.5 73.0,86.3" fill="#f6f6f6" stroke="#dcdcdc" stroke-width="0.8"/><polygon points="41.2,89.2 57.4,88.7 60.8,135.1 43.8,136.4" fill="#f3f3f3" stroke="#d9d9d9" stroke-width="0.8"/><polygon points="481.2,68.3 497.6,66.5 500.0,111.5 483.8,112.1" fill="#f3f3f3" stroke="#d9d9d9" stroke-width="0.8"/><polygon points="57.4,88.7 481.2,68.3 483.8,112.1 60.8,135.1" fill="#ededed" stroke="#d4d4d4" stroke-width="0.8"/><polygon points="38.3,44.9 50.9,41.7 97.0,39.6 81.1,43.0" fill="#8c1919"/><polygon points="81.1,43.0 97.0,39.6 99.9,84.8 84.8,86.8" fill="#c92a2a"/><polygon points="38.3,44.9 81.1,43.0 84.8,86.8 41.2,89.2" fill="#7b1a1a"/><polyline points="38.3,44.9 81.1,43.0 84.8,86.8" fill="none" stroke="#f3d9b0" stroke-width="0.8"/><polyline points="81.1,43.0 97.0,39.6" fill="none" stroke="#f3d9b0" stroke-width="0.6"/><polygon points="25.5,53.5 46.0,53.5 49.8,58.5 49.8,67.0 46.0,72.5 25.5,72.5" fill="#ff3838" stroke="#3a0a0a" stroke-width="1"/><polygon points="433.7,24.0 446.0,21.0 493.7,18.8 477.2,21.6" fill="#1c1c98"/><polygon points="477.2,21.6 493.7,18.8 496.0,63.9 480.4,67.3" fill="#2626cc"/><polygon points="433.7,24.0 477.2,21.6 480.4,67.3 437.6,69.6" fill="#1a1a8e"/><polyline points="477.2,21.6 480.4,67.3" fill="none" stroke="#c9c9f2" stroke-width="0.7"/><path d="M482.5 43V54M477 48.5H488" stroke="#fff" stroke-width="1" fill="none"/></svg>
<div class="a" style="left:683px;top:643px;width:330px;height:10px;background:#ffffff;border:1px solid #000;box-sizing:border-box;"></div>
<div class="a" style="left:683px;top:643px;width:83px;height:10px;background:#000;"></div>
<div class="a" style="left:847px;top:643px;width:83px;height:10px;background:#000;"></div>
<div class="t" style="left:671.50px;top:629px;font-size:12.0px;color:#151515;letter-spacing:0.161px;">0.00</div>
<div class="t" style="left:828.00px;top:629px;font-size:12.0px;color:#151515;letter-spacing:0.299px;">350.00</div>
<div class="t" style="left:993.00px;top:629px;font-size:12.0px;color:#151515;letter-spacing:0.316px;">700.00 (mm)</div>
<div class="t" style="left:746.00px;top:657px;font-size:12.0px;color:#151515;letter-spacing:0.216px;">175.00</div>
<div class="t" style="left:910.00px;top:657px;font-size:12.0px;color:#151515;letter-spacing:0.299px;">525.00</div>
<svg class="a" style="left:1261.3px;top:541.4px" width="110" height="90" viewBox="0 0 110 90"><path d="M40.0,70.0L37.1,26.1" stroke="#0b7311" stroke-width="3.2"/><polygon points="36.2,12.6 42.9,25.7 31.3,26.5" fill="#0e7a14"/><path d="M40.0,70.0L80.7,69.2" stroke="#9c0e0e" stroke-width="3.2"/><polygon points="94.2,68.9 80.8,75.0 80.6,63.4" fill="#c41616"/><path d="M40.0,70.0L23.9,73.8" stroke="#0a0ab0" stroke-width="3.2"/><circle cx="23.9" cy="73.8" r="5.8" fill="#0808b4"/><circle cx="54.5" cy="44.5" r="5.8" fill="#12a8b4"/><circle cx="53.0" cy="43.0" r="2.6" fill="#4fd6de"/></svg>
<div class="t" style="left:1295.60px;top:535px;font-size:12.5px;color:#2f7a3a;letter-spacing:0.000px;">Y</div>
<div class="t" style="left:1364.00px;top:601px;font-size:12.5px;color:#b03030;letter-spacing:0.000px;">X</div>
<div class="t" style="left:1277.50px;top:609px;font-size:11.0px;color:#1414b8;letter-spacing:0.000px;">Z</div>
<div class="a" style="left:313px;top:687px;width:1071px;height:17px;background:#f0f0f0;border:1px solid #000;box-sizing:border-box;"></div>
<svg class="a" style="left:313px;top:686px" width="260" height="18" viewBox="0 0 260 18"><polygon points="0,0 78,0 78,1.5 69.5,17.5 7.5,17.5 0,2" fill="#ffffff"/><path d="M0.5 1.5L7.5 17.5M78 1.5L69.5 17.5M72 5L78.5 17.5M150.5 1.5L159.5 17.5M157 10L153 17.5M250 1.5L242 17.5" stroke="#000" stroke-width="1" fill="none"/><path d="M0 17.5H7.5" stroke="#fff" stroke-width="1"/></svg>
<div class="a" style="left:312px;top:686px;width:1px;height:18px;background:#7d7d7d;"></div>
<div class="a" style="left:313px;top:686px;width:1px;height:2px;background:#7d7d7d;"></div>
<div class="t" style="left:323.50px;top:691px;font-size:11.54px;color:#151515;letter-spacing:0.333px;transform:scaleY(1.04);transform-origin:0 9px;font-weight:700;">Geometry</div>
<div class="t" style="left:392.50px;top:690px;font-size:12.0px;color:#151515;letter-spacing:-0.091px;transform:scaleY(1.0833);transform-origin:0 10px;">Print Preview</div>
<div class="t" style="left:474.50px;top:690px;font-size:12.0px;color:#151515;letter-spacing:-0.145px;transform:scaleY(1.0833);transform-origin:0 10px;">Report Preview</div>
<div class="a" style="left:311px;top:705px;width:1075px;height:292px;background:#f4f6f9;"></div>
<div class="a" style="left:311px;top:710px;width:1073px;height:22px;background:linear-gradient(90deg,#bccad9 0%,#c8d5e2 55%,#d7e2ee 100%);"></div>
<div class="a" style="left:311px;top:730px;width:1073px;height:1px;background:#8d949c;"></div>
<div class="a" style="left:311px;top:731px;width:1073px;height:1px;background:#6f7377;"></div>
<div class="t" style="left:315.50px;top:715px;font-size:12.0px;color:#1a1a1a;letter-spacing:0.021px;">Graphics Annotations</div>
<svg class="a" style="left:1358px;top:715px" width="8" height="10" viewBox="0 0 8 10"><path d="M1.5 0.5H6.5M2.5 0.5V5M5.5 0.5V5M0.5 5.5H7.5M4 6V10" stroke="#000" stroke-width="1.2" fill="none"/><rect x="4.5" y="1" width="1.5" height="4" fill="#000"/></svg>
<svg class="a" style="left:1372px;top:716px" width="9" height="9" viewBox="0 0 9 9"><path d="M1 1L8 8M8 1L1 8" stroke="#000" stroke-width="1.6" fill="none"/></svg>
<div class="a" style="left:312px;top:732px;width:1072px;height:153px;background:#a0a0a0;"></div>
<div class="a" style="left:312px;top:732px;width:1px;height:153px;background:#6e6e6e;"></div>
<div class="a" style="left:313px;top:732px;width:100px;height:17px;background:#f0f0f0;border-left:1px solid #fff;border-top:1px solid #fff;border-right:1px solid #8c8c8c;border-bottom:1px solid #8c8c8c;box-sizing:border-box;overflow:hidden;"></div>
<div class="t" style="left:317.00px;top:735px;font-size:12.0px;color:#151515;letter-spacing:-0.254px;transform:scaleY(1.0833);transform-origin:0 10px;">Type</div>
<div class="a" style="left:413px;top:732px;width:100px;height:17px;background:#f0f0f0;border-left:1px solid #fff;border-top:1px solid #fff;border-right:1px solid #8c8c8c;border-bottom:1px solid #8c8c8c;box-sizing:border-box;overflow:hidden;"></div>
<div class="t" style="left:417.00px;top:735px;font-size:12.0px;color:#151515;letter-spacing:0.040px;transform:scaleY(1.0833);transform-origin:0 10px;">Value</div>
<div class="a" style="left:513px;top:732px;width:150px;height:17px;background:#f0f0f0;border-left:1px solid #fff;border-top:1px solid #fff;border-right:1px solid #8c8c8c;border-bottom:1px solid #8c8c8c;box-sizing:border-box;overflow:hidden;"></div>
<div class="t" style="left:517.00px;top:735px;font-size:12.0px;color:#151515;letter-spacing:0.163px;transform:scaleY(1.0833);transform-origin:0 10px;">Note</div>
<div class="a" style="left:663px;top:732px;width:50px;height:17px;background:#f0f0f0;border-left:1px solid #fff;border-top:1px solid #fff;border-right:1px solid #8c8c8c;border-bottom:1px solid #8c8c8c;box-sizing:border-box;overflow:hidden;"></div>
<div class="t" style="left:667.00px;top:735px;font-size:12.0px;color:#151515;letter-spacing:0.165px;transform:scaleY(1.0833);transform-origin:0 10px;">Unit</div>
<div class="a" style="left:713px;top:732px;width:100px;height:17px;background:#f0f0f0;border-left:1px solid #fff;border-top:1px solid #fff;border-right:1px solid #8c8c8c;border-bottom:1px solid #8c8c8c;box-sizing:border-box;overflow:hidden;"></div>
<div class="t" style="left:717.00px;top:735px;font-size:12.0px;color:#151515;letter-spacing:0.029px;transform:scaleY(1.0833);transform-origin:0 10px;">Location X</div>
<div class="a" style="left:813px;top:732px;width:100px;height:17px;background:#f0f0f0;border-left:1px solid #fff;border-top:1px solid #fff;border-right:1px solid #8c8c8c;border-bottom:1px solid #8c8c8c;box-sizing:border-box;overflow:hidden;"></div>
<div class="t" style="left:817.00px;top:735px;font-size:12.0px;color:#151515;letter-spacing:0.051px;transform:scaleY(1.0833);transform-origin:0 10px;">Location Y</div>
<div class="a" style="left:913px;top:732px;width:100px;height:17px;background:#f0f0f0;border-left:1px solid #fff;border-top:1px solid #fff;border-right:1px solid #8c8c8c;border-bottom:1px solid #8c8c8c;box-sizing:border-box;overflow:hidden;"></div>
<div class="t" style="left:917.00px;top:735px;font-size:12.0px;color:#151515;letter-spacing:0.097px;transform:scaleY(1.0833);transform-origin:0 10px;">Location Z</div>
<div class="a" style="left:1013px;top:732px;width:350px;height:17px;background:#f0f0f0;border-left:1px solid #fff;border-top:1px solid #fff;border-right:1px solid #8c8c8c;border-bottom:1px solid #8c8c8c;box-sizing:border-box;overflow:hidden;"></div>
<div class="t" style="left:1017.00px;top:735px;font-size:12.0px;color:#151515;letter-spacing:-0.033px;transform:scaleY(1.0833);transform-origin:0 10px;">Association</div>
<div class="a" style="left:1363px;top:732px;width:21px;height:17px;background:#f0f0f0;border-left:1px solid #fff;border-top:1px solid #fff;border-bottom:1px solid #8c8c8c;box-sizing:border-box;"></div>
<div class="a" style="left:1363px;top:732px;width:21px;height:17px;overflow:hidden;">
<div class="t" style="left:4.00px;top:3px;font-size:12.0px;color:#151515;letter-spacing:-0.555px;transform:scaleY(1.0833);transform-origin:0 10px;">Time</div>
</div>
<div class="a" style="left:311px;top:891px;width:1073px;height:22px;background:linear-gradient(90deg,#bccad9 0%,#c8d5e2 55%,#d7e2ee 100%);"></div>
<div class="a" style="left:311px;top:911px;width:1073px;height:1px;background:#8d949c;"></div>
<div class="a" style="left:311px;top:912px;width:1073px;height:1px;background:#6f7377;"></div>
<div class="t" style="left:315.50px;top:896px;font-size:12.0px;color:#1a1a1a;letter-spacing:-0.524px;">Messages</div>
<svg class="a" style="left:1358px;top:896px" width="8" height="10" viewBox="0 0 8 10"><path d="M1.5 0.5H6.5M2.5 0.5V5M5.5 0.5V5M0.5 5.5H7.5M4 6V10" stroke="#000" stroke-width="1.2" fill="none"/><rect x="4.5" y="1" width="1.5" height="4" fill="#000"/></svg>
<svg class="a" style="left:1372px;top:897px" width="9" height="9" viewBox="0 0 9 9"><path d="M1 1L8 8M8 1L1 8" stroke="#000" stroke-width="1.6" fill="none"/></svg>
<div class="a" style="left:312px;top:913px;width:1072px;height:84px;background:#a0a0a0;"></div>
<div class="a" style="left:312px;top:913px;width:1px;height:84px;background:#6e6e6e;"></div>
<div class="a" style="left:313px;top:913px;width:50px;height:17px;background:#f0f0f0;border-left:1px solid #fff;border-top:1px solid #fff;border-right:1px solid #8c8c8c;border-bottom:1px solid #8c8c8c;box-sizing:border-box;overflow:hidden;"></div>
<div class="a" style="left:363px;top:913px;width:465px;height:17px;background:#f0f0f0;border-left:1px solid #fff;border-top:1px solid #fff;border-right:1px solid #8c8c8c;border-bottom:1px solid #8c8c8c;box-sizing:border-box;overflow:hidden;"></div>
<div class="t" style="left:367.00px;top:916px;font-size:12.0px;color:#151515;letter-spacing:-0.002px;transform:scaleY(1.0833);transform-origin:0 10px;">Text</div>
<div class="a" style="left:828px;top:913px;width:305px;height:17px;background:#f0f0f0;border-left:1px solid #fff;border-top:1px solid #fff;border-right:1px solid #8c8c8c;border-bottom:1px solid #8c8c8c;box-sizing:border-box;overflow:hidden;"></div>
<div class="t" style="left:832.00px;top:916px;font-size:12.0px;color:#151515;letter-spacing:-0.033px;transform:scaleY(1.0833);transform-origin:0 10px;">Association</div>
<div class="a" style="left:1133px;top:913px;width:220px;height:17px;background:#f0f0f0;border-left:1px solid #fff;border-top:1px solid #fff;border-right:1px solid #8c8c8c;border-bottom:1px solid #8c8c8c;box-sizing:border-box;overflow:hidden;"></div>
<div class="t" style="left:1137.00px;top:916px;font-size:12.0px;color:#151515;letter-spacing:0.011px;transform:scaleY(1.0833);transform-origin:0 10px;">Timestamp</div>
<div class="a" style="left:0px;top:1003px;width:1988px;height:1px;background:#a0a0a0;"></div>
<div class="a" style="left:534px;top:1004px;width:1px;height:18px;background:#ffffff;"></div>
<div class="a" style="left:793px;top:1004px;width:1px;height:18px;background:#ffffff;"></div>
<div class="a" style="left:1011px;top:1004px;width:1px;height:18px;background:#ffffff;"></div>
<div class="a" style="left:1491px;top:1004px;width:1px;height:18px;background:#ffffff;"></div>
<div class="a" style="left:1946px;top:1004px;width:1px;height:18px;background:#ffffff;"></div>
<div class="a" style="left:537px;top:1004px;width:1px;height:18px;background:#a0a0a0;"></div>
<div class="a" style="left:796px;top:1004px;width:1px;height:18px;background:#a0a0a0;"></div>
<div class="a" style="left:1014px;top:1004px;width:1px;height:18px;background:#a0a0a0;"></div>
<div class="a" style="left:1493px;top:1004px;width:1px;height:18px;background:#a0a0a0;"></div>
<div class="a" style="left:534px;top:1003px;width:3px;height:1px;background:#f0f0f0;"></div>
<div class="a" style="left:793px;top:1003px;width:3px;height:1px;background:#f0f0f0;"></div>
<div class="a" style="left:1011px;top:1003px;width:3px;height:1px;background:#f0f0f0;"></div>
<div class="a" style="left:1491px;top:1003px;width:2px;height:1px;background:#f0f0f0;"></div>
<div class="a" style="left:1946px;top:1003px;width:42px;height:1px;background:#f0f0f0;"></div>
<div class="t" style="left:819.00px;top:1007px;font-size:12.0px;color:#151515;letter-spacing:-0.306px;transform:scaleY(1.0833);transform-origin:0 10px;">No Messages</div>
<div class="t" style="left:1016.60px;top:1007px;font-size:12.0px;color:#151515;letter-spacing:0.363px;transform:scaleY(1.0833);transform-origin:0 10px;">No Selection</div>
<div class="t" style="left:1494.60px;top:1007px;font-size:12.0px;color:#151515;letter-spacing:0.253px;transform:scaleY(1.0833);transform-origin:0 10px;">Metric (mm, kg, N, s, mV, mA)</div>
<div class="t" style="left:1678.40px;top:1007px;font-size:12.0px;color:#151515;letter-spacing:-0.394px;transform:scaleY(1.0833);transform-origin:0 10px;">Degrees</div>
<div class="t" style="left:1737.00px;top:1007px;font-size:12.0px;color:#151515;letter-spacing:-0.016px;transform:scaleY(1.0833);transform-origin:0 10px;">rad/s</div>
<div class="t" style="left:1780.00px;top:1007px;font-size:12.0px;color:#151515;letter-spacing:-0.421px;transform:scaleY(1.0833);transform-origin:0 10px;">Celsius</div>
<svg class="a" style="left:797px;top:1008px" width="18" height="14" viewBox="0 0 18 14"><path d="M1.5 1.5H16.5V8.5H7.5L4 12V8.5H1.5Z" fill="#fff2a8" stroke="#d6b42a" stroke-width="1"/></svg>
<div class="t" style="left:804.60px;top:1004px;font-size:13.5px;color:#000;letter-spacing:0.000px;text-shadow:0.4px 0 0 #000;">0</div>
<svg class="a" style="left:1974px;top:1008px" width="14" height="14" viewBox="0 0 14 14"><path d="M13 3L3 13M13 7L7 13M13 11L11 13" stroke="#a8a8a8" stroke-width="1.2"/></svg>
<div class="a" style="left:1386px;top:151px;width:602px;height:846px;background:#f4f6f9;"></div>
<div class="a" style="left:1390px;top:151px;width:597px;height:22px;background:linear-gradient(90deg,#bccad9 0%,#c8d5e2 55%,#d7e2ee 100%);"></div>
<div class="a" style="left:1390px;top:171px;width:597px;height:1px;background:#8d949c;"></div>
<div class="a" style="left:1390px;top:172px;width:597px;height:1px;background:#6f7377;"></div>
<div class="t" style="left:1394.00px;top:156px;font-size:12.0px;color:#1a1a1a;letter-spacing:0.108px;transform:scaleY(1.0833);transform-origin:0 10px;">Contact Body View</div>
<svg class="a" style="left:1975px;top:156px" width="8" height="10" viewBox="0 0 8 10"><path d="M1.5 0.5H6.5M2.5 0.5V5M5.5 0.5V5M0.5 5.5H7.5M4 6V10" stroke="#000" stroke-width="1.2" fill="none"/><rect x="4.5" y="1" width="1.5" height="4" fill="#000"/></svg>
<div class="a" style="left:1390px;top:173px;width:597px;height:398px;background:#ffffff;border-left:2px solid #7d7d7d;border-right:1px solid #c0c0c0;border-bottom:1px solid #d0d0d0;box-sizing:border-box;"></div>
<svg class="a" style="left:1500px;top:230px" width="380" height="290" viewBox="0 0 380 290"><polygon points="28.9,39.5 111.5,23.6 333.8,13.1 252.0,28.2" fill="#8c0000" stroke="#8c0000" stroke-width="0.9" stroke-linejoin="round"/><polygon points="252.0,28.2 333.8,13.1 349.3,243.8 265.8,259.7" fill="#c40202" stroke="#c40202" stroke-width="0.9" stroke-linejoin="round"/><polygon points="28.9,39.5 252.0,28.2 265.8,259.7 44.4,270.6" fill="#790000" stroke="#790000" stroke-width="0.9" stroke-linejoin="round"/></svg>
<div class="a" style="left:1593px;top:533px;width:192px;height:7px;background:#ffffff;border:1px solid #000;box-sizing:border-box;"></div>
<div class="a" style="left:1593px;top:533px;width:96px;height:7px;background:#000;"></div>
<div class="t" style="left:1579.50px;top:519px;font-size:12.0px;color:#000;letter-spacing:0.411px;">0.00</div>
<div class="t" style="left:1767.00px;top:519px;font-size:12.0px;color:#000;letter-spacing:0.494px;">80.00</div>
<div class="t" style="left:1672.00px;top:542px;font-size:12.0px;color:#000;letter-spacing:0.294px;">40.00</div>
<svg class="a" style="left:1887px;top:450.70000000000005px" width="110" height="90" viewBox="0 0 110 90"><path d="M40.0,70.0L38.1,43.1" stroke="#0b7311" stroke-width="2.1"/><polygon points="37.6,35.1 41.6,42.8 34.7,43.3" fill="#0e7a14"/><path d="M40.0,70.0L64.8,69.0" stroke="#9c0e0e" stroke-width="2.1"/><polygon points="72.8,68.7 64.9,72.5 64.7,65.5" fill="#c41616"/><path d="M40.0,70.0L30.4,71.7" stroke="#0a0ab0" stroke-width="2.1"/><circle cx="30.4" cy="71.7" r="3.6" fill="#0808b4"/><circle cx="48.5" cy="53.8" r="3.6" fill="#12a8b4"/><circle cx="47.6" cy="52.9" r="1.6" fill="#4fd6de"/></svg>
<div class="t" style="left:1924.60px;top:470px;font-size:13.0px;color:#2f6a3a;letter-spacing:0.000px;">Y</div>
<div class="t" style="left:1964.40px;top:509px;font-size:13.0px;color:#a83030;letter-spacing:0.000px;">X</div>
<div class="t" style="left:1913.00px;top:513px;font-size:9.5px;color:#1414a8;letter-spacing:0.000px;">Z</div>
<div class="a" style="left:1390px;top:577px;width:597px;height:22px;background:linear-gradient(90deg,#bccad9 0%,#c8d5e2 55%,#d7e2ee 100%);"></div>
<div class="a" style="left:1390px;top:597px;width:597px;height:1px;background:#8d949c;"></div>
<div class="a" style="left:1390px;top:598px;width:597px;height:1px;background:#6f7377;"></div>
<div class="t" style="left:1394.00px;top:582px;font-size:12.0px;color:#1a1a1a;letter-spacing:0.052px;transform:scaleY(1.0833);transform-origin:0 10px;">Target Body View</div>
<svg class="a" style="left:1975px;top:582px" width="8" height="10" viewBox="0 0 8 10"><path d="M1.5 0.5H6.5M2.5 0.5V5M5.5 0.5V5M0.5 5.5H7.5M4 6V10" stroke="#000" stroke-width="1.2" fill="none"/><rect x="4.5" y="1" width="1.5" height="4" fill="#000"/></svg>
<div class="a" style="left:1390px;top:599px;width:597px;height:398px;background:#ffffff;border-left:2px solid #7d7d7d;border-right:1px solid #c0c0c0;border-bottom:1px solid #d0d0d0;box-sizing:border-box;"></div>
<svg class="a" style="left:1450px;top:610px" width="470" height="380" viewBox="0 0 470 380"><polygon points="22.9,44.3 130.3,25.7 434.4,10.2 319.0,31.0" fill="#00008c" stroke="#00008c" stroke-width="0.9" stroke-linejoin="round"/><polygon points="319.0,31.0 434.4,10.2 454.3,330.6 345.6,350.6" fill="#0202c6" stroke="#0202c6" stroke-width="0.9" stroke-linejoin="round"/><polygon points="22.9,44.3 319.0,31.0 345.6,350.6 43.7,365.3" fill="#00007b" stroke="#00007b" stroke-width="0.9" stroke-linejoin="round"/></svg>
<div class="a" style="left:1592px;top:958px;width:96px;height:7px;background:#05052a;"></div>
<div class="a" style="left:1688px;top:958px;width:97px;height:7px;border:1px solid #0a0a30;border-left:none;border-top-color:#00007b;box-sizing:border-box;"></div>
<div class="t" style="left:1579.50px;top:944px;font-size:12.0px;color:#05054a;letter-spacing:0.411px;">0.00</div>
<div class="t" style="left:1767.00px;top:944px;font-size:12.0px;color:#05054a;letter-spacing:0.494px;">60.00</div>
<div class="t" style="left:1671.30px;top:967px;font-size:12.0px;color:#000;letter-spacing:0.434px;">30.00</div>
<svg class="a" style="left:1887px;top:876.7px" width="110" height="90" viewBox="0 0 110 90"><path d="M40.0,70.0L38.1,43.1" stroke="#0b7311" stroke-width="2.1"/><polygon points="37.6,35.1 41.6,42.8 34.7,43.3" fill="#0e7a14"/><path d="M40.0,70.0L64.8,69.0" stroke="#9c0e0e" stroke-width="2.1"/><polygon points="72.8,68.7 64.9,72.5 64.7,65.5" fill="#c41616"/><path d="M40.0,70.0L30.4,71.7" stroke="#0a0ab0" stroke-width="2.1"/><circle cx="30.4" cy="71.7" r="3.6" fill="#0808b4"/><circle cx="48.5" cy="53.8" r="3.6" fill="#12a8b4"/><circle cx="47.6" cy="52.9" r="1.6" fill="#4fd6de"/></svg>
<div class="t" style="left:1924.60px;top:896px;font-size:13.0px;color:#2f6a3a;letter-spacing:0.000px;">Y</div>
<div class="t" style="left:1964.40px;top:935px;font-size:13.0px;color:#a83030;letter-spacing:0.000px;">X</div>
<div class="t" style="left:1913.00px;top:939px;font-size:9.5px;color:#1414a8;letter-spacing:0.000px;">Z</div>
</div>
</body></html>
